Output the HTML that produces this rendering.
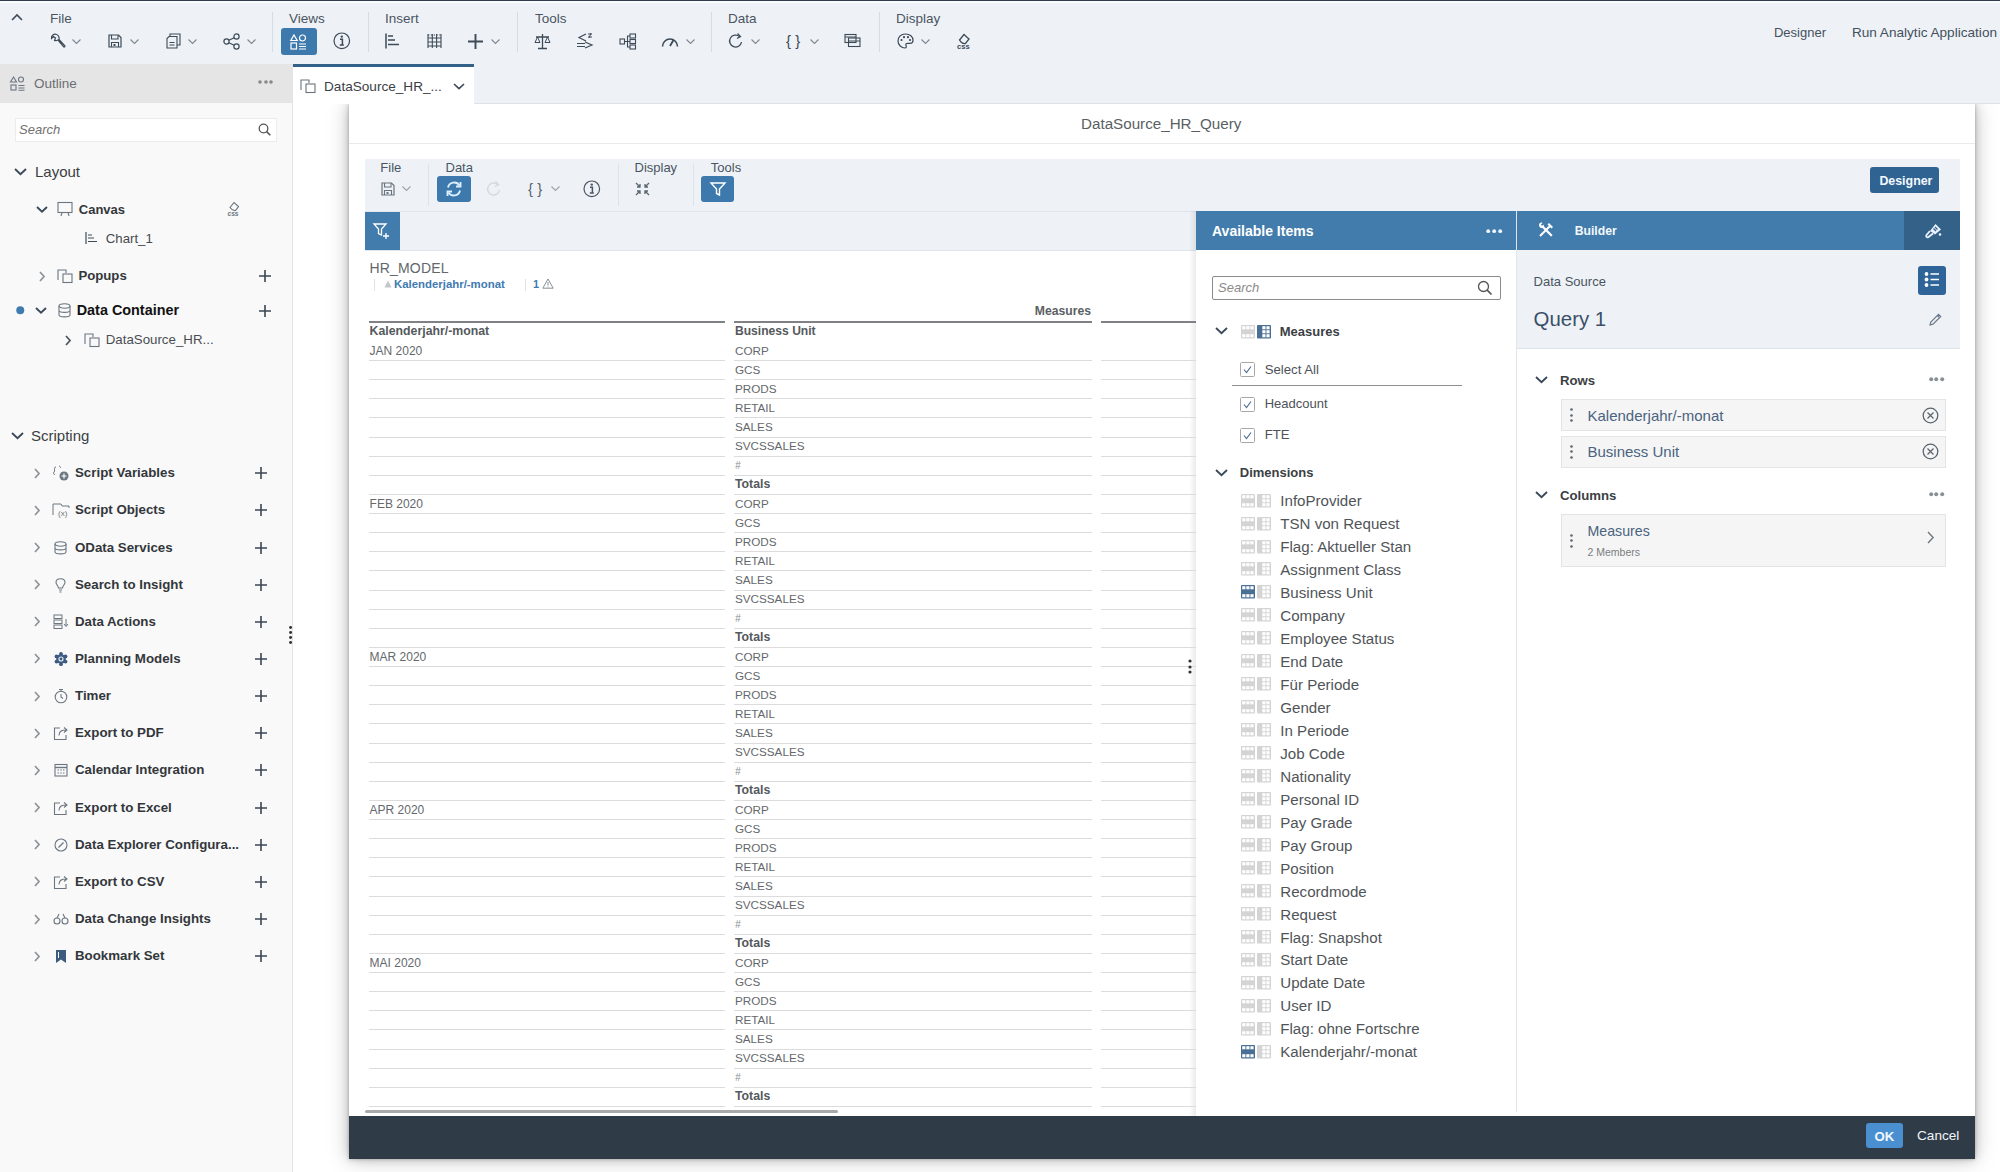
<!DOCTYPE html><html><head><meta charset="utf-8"><style>
html,body{margin:0;padding:0;width:2000px;height:1172px;overflow:hidden;background:#fff;font-family:"Liberation Sans", sans-serif;}
.t{position:absolute;white-space:nowrap;}
.r{position:absolute;}
svg.r{overflow:visible}
</style></head><body>
<div class="r" style="left:0px;top:0px;width:2000px;height:64px;background:#eef2f7;"></div>
<div class="r" style="left:0px;top:0px;width:2000px;height:1px;background:#2f3d4c;"></div>
<div class="r" style="left:0px;top:1px;width:2000px;height:2px;background:#f9fcff;"></div>
<div class="r" style="left:272px;top:12px;width:1px;height:40px;background:#d6dce3;"></div>
<div class="r" style="left:368px;top:12px;width:1px;height:40px;background:#d6dce3;"></div>
<div class="r" style="left:517px;top:12px;width:1px;height:40px;background:#d6dce3;"></div>
<div class="r" style="left:711px;top:12px;width:1px;height:40px;background:#d6dce3;"></div>
<div class="r" style="left:879px;top:12px;width:1px;height:40px;background:#d6dce3;"></div>
<div class="t" style="top:12.03px;font-size:13.5px;line-height:13.5px;left:50.00px;color:#4a5561;">File</div>
<div class="t" style="top:12.03px;font-size:13.5px;line-height:13.5px;left:289.00px;color:#4a5561;">Views</div>
<div class="t" style="top:12.03px;font-size:13.5px;line-height:13.5px;left:385.00px;color:#4a5561;">Insert</div>
<div class="t" style="top:12.03px;font-size:13.5px;line-height:13.5px;left:535.00px;color:#4a5561;">Tools</div>
<div class="t" style="top:12.03px;font-size:13.5px;line-height:13.5px;left:728.00px;color:#4a5561;">Data</div>
<div class="t" style="top:12.03px;font-size:13.5px;line-height:13.5px;left:896.00px;color:#4a5561;">Display</div>
<div class="t" style="top:26.15px;font-size:13px;line-height:13px;right:174.00px;color:#45505c;">Designer</div>
<div class="t" style="top:25.64px;font-size:13.6px;line-height:13.6px;right:3.00px;color:#45505c;">Run Analytic Application</div>
<div class="r" style="left:0px;top:64px;width:293px;height:1108px;background:#f9f9f9;"></div>
<div class="r" style="left:292px;top:64px;width:1px;height:1108px;background:#e4e4e4;"></div>
<div class="r" style="left:0px;top:64px;width:292px;height:39px;background:#e5e5e5;"></div>
<div class="t" style="top:76.53px;font-size:13.5px;line-height:13.5px;left:34.00px;color:#6b6f73;">Outline</div>
<div class="r" style="left:15px;top:118px;width:262px;height:24px;background:#fff;border:1px solid #ececec;box-sizing:border-box;"></div>
<div class="t" style="top:123.45px;font-size:13px;line-height:13px;left:19.00px;font-style:italic;color:#707070;">Search</div>
<div class="r" style="left:349px;top:104px;width:1626px;height:1055px;background:#fff;box-shadow:0 0 3px rgba(0,0,0,0.22),0 0 8px rgba(0,0,0,0.14),0 0 20px rgba(0,0,0,0.26);"></div>
<div class="r" style="left:293px;top:64px;width:1707px;height:40px;background:#eef2f7;"></div>
<div class="r" style="left:293px;top:103px;width:1707px;height:1px;background:#dde3ea;"></div>
<div class="r" style="left:293px;top:64px;width:181px;height:40px;background:#fff;"></div>
<div class="r" style="left:293px;top:64px;width:181px;height:3px;background:#346187;"></div>
<div class="t" style="top:116.08px;font-size:15.2px;line-height:15.2px;left:0.00px;color:#5a5f64;left:1081px;">DataSource_HR_Query</div>
<div class="r" style="left:349px;top:143px;width:1626px;height:1px;background:#eaeaea;"></div>
<div class="r" style="left:365px;top:159px;width:1595px;height:52px;background:#eef2f7;"></div>
<div class="r" style="left:365px;top:211px;width:1595px;height:1px;background:#dfe5ec;"></div>
<div class="r" style="left:365px;top:212px;width:831px;height:38px;background:#eef2f7;"></div>
<div class="r" style="left:365px;top:250px;width:831px;height:1px;background:#dfe5ec;"></div>
<div class="r" style="left:365px;top:212px;width:35px;height:38px;background:#427cac;"></div>
<div class="r" style="left:349px;top:1116px;width:1626px;height:43px;background:#2f3c48;"></div>
<div class="r" style="left:1196px;top:211px;width:320px;height:905px;background:#fff;"></div>
<div class="r" style="left:1189px;top:211px;width:7px;height:905px;background:linear-gradient(90deg,rgba(0,0,0,0) 0%,rgba(0,0,0,0.08) 100%);"></div>
<div class="r" style="left:1196px;top:211px;width:320px;height:39px;background:#427cac;"></div>
<div class="r" style="left:1516px;top:211px;width:1px;height:901px;background:#e5e5e5;"></div>
<div class="t" style="top:224.10px;font-size:14px;line-height:14px;left:1212.00px;font-weight:700;color:#ffffff;">Available Items</div>
<div class="r" style="left:1517px;top:211px;width:443px;height:39px;background:#427cac;"></div>
<div class="r" style="left:1904px;top:211px;width:56px;height:39px;background:#346187;"></div>
<div class="t" style="top:225.03px;font-size:12.2px;line-height:12.2px;left:1574.70px;font-weight:700;color:#f4f8fc;">Builder</div>
<div class="r" style="left:1517px;top:250px;width:443px;height:98px;background:#eef2f7;"></div>
<div class="r" style="left:1517px;top:348px;width:443px;height:1px;background:#dde3ea;"></div>
<div class="t" style="top:274.65px;font-size:13px;line-height:13px;left:1533.60px;color:#4a5561;">Data Source</div>
<div class="t" style="top:309.36px;font-size:20.4px;line-height:20.4px;left:1533.60px;color:#3a4f68;">Query 1</div>
<div class="r" style="left:1918px;top:266px;width:28px;height:29px;background:#2e6497;border-radius:3px;"></div>
<svg class="r" style="left:10px;top:76px;" width="15" height="15" viewBox="0 0 15 15"><path d="M3.5,1 L6.5,6 H0.5Z" fill="none" stroke="#6c7680" stroke-width="1.1"/><circle cx="11" cy="3.5" r="2.5" fill="none" stroke="#6c7680" stroke-width="1.1"/><rect x="1" y="9" width="5" height="5" fill="none" stroke="#6c7680" stroke-width="1.1"/><path d="M8.5,9.5h6M8.5,12h6M8.5,14.3h6" stroke="#6c7680" stroke-width="1.1"/></svg>
<svg class="r" style="left:258.0px;top:80px;" width="4" height="4" viewBox="0 0 4 4"><circle cx="2" cy="2" r="1.8" fill="#888"/></svg>
<svg class="r" style="left:263.5px;top:80px;" width="4" height="4" viewBox="0 0 4 4"><circle cx="2" cy="2" r="1.8" fill="#888"/></svg>
<svg class="r" style="left:269.0px;top:80px;" width="4" height="4" viewBox="0 0 4 4"><circle cx="2" cy="2" r="1.8" fill="#888"/></svg>
<svg class="r" style="left:258px;top:123px;" width="13" height="13" viewBox="0 0 13 13"><circle cx="5.5" cy="5.5" r="4.3" fill="none" stroke="#555" stroke-width="1.3"/><path d="M8.6,8.6 L12.3,12.3" stroke="#555" stroke-width="1.6"/></svg>
<svg class="r" style="left:14.0px;top:167.925px;" width="13" height="7.15" viewBox="0 0 13 7.15"><polyline points="1,1 6.5,6.15 12,1" fill="none" stroke="#3a4a5a" stroke-width="1.9"/></svg>
<div class="t" style="top:164.05px;font-size:15px;line-height:15px;left:35.00px;color:#3b3f44;">Layout</div>
<svg class="r" style="left:35.5px;top:206.2px;" width="12" height="6.6000000000000005" viewBox="0 0 12 6.6000000000000005"><polyline points="1,1 6.0,5.6000000000000005 11,1" fill="none" stroke="#3a4a5a" stroke-width="1.9"/></svg>
<svg class="r" style="left:57px;top:201px;" width="16" height="16" viewBox="0 0 16 16"><rect x="1" y="1.5" width="14" height="10" fill="none" stroke="#6c7680" stroke-width="1.1"/><path d="M5,11.5 L4,15 M11,11.5 L12,15" stroke="#6c7680" stroke-width="1.1"/></svg>
<div class="t" style="top:202.75px;font-size:13px;line-height:13px;left:78.80px;font-weight:700;color:#33373b;">Canvas</div>
<svg class="r" style="left:226px;top:201px;" width="15" height="16" viewBox="0 0 15 16"><path d="M4,6.5 L8,1.5 L12.5,5.5 L9.5,9.5 C7.5,10 5.5,8.5 4,6.5Z" fill="none" stroke="#6c7680" stroke-width="1.2"/><text x="1.5" y="15" font-size="6.6" font-weight="700" font-family="Liberation Sans" fill="#6c7680">css</text></svg>
<svg class="r" style="left:85px;top:232px;" width="14" height="12" viewBox="0 0 14 12"><path d="M1,0 V12 M3,3h4 M3,6h6 M3,9.5h9" stroke="#3e4b59" stroke-width="1.2"/></svg>
<div class="t" style="top:231.78px;font-size:13.2px;line-height:13.2px;left:105.80px;color:#45494e;">Chart_1</div>
<svg class="r" style="left:39.475px;top:270.5px;" width="6.050000000000001" height="11" viewBox="0 0 6.050000000000001 11"><polyline points="1,1 5.050000000000001,5.5 1,10" fill="none" stroke="#8d9399" stroke-width="1.7"/></svg>
<svg class="r" style="left:57px;top:269px;" width="16" height="14" viewBox="0 0 16 14"><path d="M1,11 V1 H9 V4" fill="none" stroke="#6c7680" stroke-width="1.1"/><rect x="6" y="5" width="9" height="8.5" fill="none" stroke="#6c7680" stroke-width="1.1"/></svg>
<div class="t" style="top:269.28px;font-size:13.2px;line-height:13.2px;left:78.40px;font-weight:700;color:#33373b;">Popups</div>
<svg class="r" style="left:259.0px;top:270.0px;" width="12" height="12" viewBox="0 0 12 12"><path d="M6.0,0 V12 M0,6.0 H12" stroke="#3a4654" stroke-width="1.6"/></svg>
<svg class="r" style="left:15.5px;top:306px;" width="8.5" height="8.5" viewBox="0 0 8.5 8.5"><circle cx="4.25" cy="4.25" r="4" fill="#3f7ab0"/></svg>
<svg class="r" style="left:35.3px;top:307.2px;" width="12" height="6.6000000000000005" viewBox="0 0 12 6.6000000000000005"><polyline points="1,1 6.0,5.6000000000000005 11,1" fill="none" stroke="#3a4a5a" stroke-width="1.9"/></svg>
<svg class="r" style="left:58px;top:303px;" width="13" height="15" viewBox="0 0 13 15"><ellipse cx="6.5" cy="3" rx="5.5" ry="2.2" fill="none" stroke="#6c7680" stroke-width="1.1"/><path d="M1,3 V12 C1,14.5 12,14.5 12,12 V3 M1,7.5 C1,10 12,10 12,7.5" fill="none" stroke="#6c7680" stroke-width="1.1"/></svg>
<div class="t" style="top:303.26px;font-size:14.4px;line-height:14.4px;left:76.70px;font-weight:700;color:#111;">Data Container</div>
<svg class="r" style="left:259.0px;top:304.5px;" width="12" height="12" viewBox="0 0 12 12"><path d="M6.0,0 V12 M0,6.0 H12" stroke="#3a4654" stroke-width="1.6"/></svg>
<svg class="r" style="left:65.475px;top:334.5px;" width="6.050000000000001" height="11" viewBox="0 0 6.050000000000001 11"><polyline points="1,1 5.050000000000001,5.5 1,10" fill="none" stroke="#4a5360" stroke-width="1.7"/></svg>
<svg class="r" style="left:84px;top:333px;" width="16" height="14" viewBox="0 0 16 14"><path d="M1,11 V1 H9 V4" fill="none" stroke="#6c7680" stroke-width="1.1"/><rect x="6" y="5" width="9" height="8.5" fill="none" stroke="#6c7680" stroke-width="1.1"/></svg>
<div class="t" style="top:333.30px;font-size:13.3px;line-height:13.3px;left:105.70px;color:#4a4e53;">DataSource_HR...</div>
<svg class="r" style="left:10.5px;top:432.425px;" width="13" height="7.15" viewBox="0 0 13 7.15"><polyline points="1,1 6.5,6.15 12,1" fill="none" stroke="#3a4a5a" stroke-width="1.9"/></svg>
<div class="t" style="top:428.25px;font-size:15px;line-height:15px;left:31.00px;color:#3b3f44;">Scripting</div>
<svg class="r" style="left:34.175000000000004px;top:467.7px;" width="6.050000000000001" height="11" viewBox="0 0 6.050000000000001 11"><polyline points="1,1 5.050000000000001,5.5 1,10" fill="none" stroke="#8d9399" stroke-width="1.7"/></svg>
<div class="t" style="top:466.19px;font-size:13.3px;line-height:13.3px;left:75.00px;font-weight:700;color:#33373b;">Script Variables</div>
<svg class="r" style="left:255.0px;top:467.2px;" width="12" height="12" viewBox="0 0 12 12"><path d="M6.0,0 V12 M0,6.0 H12" stroke="#3a4654" stroke-width="1.6"/></svg>
<svg class="r" style="left:52px;top:465.2px;" width="18" height="16" viewBox="0 0 18 16"><path d="M4,2 C2,2 2.5,4 2.5,6 C2.5,7.5 1,8 1,8 C1,8 2.5,8.5 2.5,10 M7,1 C8,1 8.5,2 8.5,3" fill="none" stroke="#6c7680" stroke-width="1"/><circle cx="12" cy="11" r="4.5" fill="#6c7680"/><path d="M12,8.5v5M9.5,11h5" stroke="#fff" stroke-width="1.2"/></svg>
<svg class="r" style="left:34.175000000000004px;top:504.84999999999997px;" width="6.050000000000001" height="11" viewBox="0 0 6.050000000000001 11"><polyline points="1,1 5.050000000000001,5.5 1,10" fill="none" stroke="#8d9399" stroke-width="1.7"/></svg>
<div class="t" style="top:503.34px;font-size:13.3px;line-height:13.3px;left:75.00px;font-weight:700;color:#33373b;">Script Objects</div>
<svg class="r" style="left:255.0px;top:504.34999999999997px;" width="12" height="12" viewBox="0 0 12 12"><path d="M6.0,0 V12 M0,6.0 H12" stroke="#3a4654" stroke-width="1.6"/></svg>
<svg class="r" style="left:52px;top:502.34999999999997px;" width="19" height="16" viewBox="0 0 19 16"><path d="M1,13 V2 H9 L10,4 H17 V6" fill="none" stroke="#6c7680" stroke-width="1"/><text x="6" y="14" font-size="8" font-family="Liberation Sans" fill="#6c7680">(x)</text></svg>
<svg class="r" style="left:34.175000000000004px;top:542.0px;" width="6.050000000000001" height="11" viewBox="0 0 6.050000000000001 11"><polyline points="1,1 5.050000000000001,5.5 1,10" fill="none" stroke="#8d9399" stroke-width="1.7"/></svg>
<div class="t" style="top:540.50px;font-size:13.3px;line-height:13.3px;left:75.00px;font-weight:700;color:#33373b;">OData Services</div>
<svg class="r" style="left:255.0px;top:541.5px;" width="12" height="12" viewBox="0 0 12 12"><path d="M6.0,0 V12 M0,6.0 H12" stroke="#3a4654" stroke-width="1.6"/></svg>
<svg class="r" style="left:54px;top:540.5px;" width="13" height="14" viewBox="0 0 13 14"><ellipse cx="6.5" cy="3" rx="5.5" ry="2.2" fill="none" stroke="#6c7680" stroke-width="1.1"/><path d="M1,3 V11 C1,13.5 12,13.5 12,11 V3 M1,7 C1,9.5 12,9.5 12,7" fill="none" stroke="#6c7680" stroke-width="1.1"/></svg>
<svg class="r" style="left:34.175000000000004px;top:579.15px;" width="6.050000000000001" height="11" viewBox="0 0 6.050000000000001 11"><polyline points="1,1 5.050000000000001,5.5 1,10" fill="none" stroke="#8d9399" stroke-width="1.7"/></svg>
<div class="t" style="top:577.64px;font-size:13.3px;line-height:13.3px;left:75.00px;font-weight:700;color:#33373b;">Search to Insight</div>
<svg class="r" style="left:255.0px;top:578.65px;" width="12" height="12" viewBox="0 0 12 12"><path d="M6.0,0 V12 M0,6.0 H12" stroke="#3a4654" stroke-width="1.6"/></svg>
<svg class="r" style="left:55px;top:577.65px;" width="11" height="15" viewBox="0 0 11 15"><path d="M3.5,10 C3.5,8 1,6.5 1,4.5 C1,2 3,0.8 5.5,0.8 C8,0.8 10,2 10,4.5 C10,6.5 7.5,8 7.5,10Z M4,12h3 M4.5,14h2" fill="none" stroke="#6c7680" stroke-width="1.1"/></svg>
<svg class="r" style="left:34.175000000000004px;top:616.3px;" width="6.050000000000001" height="11" viewBox="0 0 6.050000000000001 11"><polyline points="1,1 5.050000000000001,5.5 1,10" fill="none" stroke="#8d9399" stroke-width="1.7"/></svg>
<div class="t" style="top:614.79px;font-size:13.3px;line-height:13.3px;left:75.00px;font-weight:700;color:#33373b;">Data Actions</div>
<svg class="r" style="left:255.0px;top:615.8px;" width="12" height="12" viewBox="0 0 12 12"><path d="M6.0,0 V12 M0,6.0 H12" stroke="#3a4654" stroke-width="1.6"/></svg>
<svg class="r" style="left:53px;top:613.8px;" width="16" height="16" viewBox="0 0 16 16"><rect x="1" y="1" width="8" height="3.5" fill="none" stroke="#6c7680" stroke-width="1"/><rect x="1" y="6" width="8" height="3.5" fill="none" stroke="#6c7680" stroke-width="1"/><rect x="1" y="11" width="8" height="3.5" fill="none" stroke="#6c7680" stroke-width="1"/><path d="M13,5 V12 M11,10 L13,12.5 L15,10" fill="none" stroke="#6c7680" stroke-width="1"/></svg>
<svg class="r" style="left:34.175000000000004px;top:653.45px;" width="6.050000000000001" height="11" viewBox="0 0 6.050000000000001 11"><polyline points="1,1 5.050000000000001,5.5 1,10" fill="none" stroke="#8d9399" stroke-width="1.7"/></svg>
<div class="t" style="top:651.95px;font-size:13.3px;line-height:13.3px;left:75.00px;font-weight:700;color:#33373b;">Planning Models</div>
<svg class="r" style="left:255.0px;top:652.95px;" width="12" height="12" viewBox="0 0 12 12"><path d="M6.0,0 V12 M0,6.0 H12" stroke="#3a4654" stroke-width="1.6"/></svg>
<svg class="r" style="left:54px;top:651.95px;" width="14" height="14" viewBox="0 0 14 14"><circle cx="11.50" cy="9.60" r="1.9" fill="#3d5a80"/><circle cx="7.00" cy="12.20" r="1.9" fill="#3d5a80"/><circle cx="2.50" cy="9.60" r="1.9" fill="#3d5a80"/><circle cx="2.50" cy="4.40" r="1.9" fill="#3d5a80"/><circle cx="7.00" cy="1.80" r="1.9" fill="#3d5a80"/><circle cx="11.50" cy="4.40" r="1.9" fill="#3d5a80"/><circle cx="7" cy="7" r="4.8" fill="#3d5a80"/><circle cx="7" cy="7" r="2.6" fill="#dfe8f2"/><circle cx="7" cy="7" r="1.4" fill="#3d5a80"/></svg>
<svg class="r" style="left:34.175000000000004px;top:690.5999999999999px;" width="6.050000000000001" height="11" viewBox="0 0 6.050000000000001 11"><polyline points="1,1 5.050000000000001,5.5 1,10" fill="none" stroke="#8d9399" stroke-width="1.7"/></svg>
<div class="t" style="top:689.09px;font-size:13.3px;line-height:13.3px;left:75.00px;font-weight:700;color:#33373b;">Timer</div>
<svg class="r" style="left:255.0px;top:690.0999999999999px;" width="12" height="12" viewBox="0 0 12 12"><path d="M6.0,0 V12 M0,6.0 H12" stroke="#3a4654" stroke-width="1.6"/></svg>
<svg class="r" style="left:54px;top:688.0999999999999px;" width="14" height="16" viewBox="0 0 14 16"><circle cx="7" cy="9" r="5.8" fill="none" stroke="#6c7680" stroke-width="1.1"/><path d="M7,6 V9 L9,10.5 M5,1.5h4 M7,1.5v1.5" fill="none" stroke="#6c7680" stroke-width="1.1"/></svg>
<svg class="r" style="left:34.175000000000004px;top:727.75px;" width="6.050000000000001" height="11" viewBox="0 0 6.050000000000001 11"><polyline points="1,1 5.050000000000001,5.5 1,10" fill="none" stroke="#8d9399" stroke-width="1.7"/></svg>
<div class="t" style="top:726.25px;font-size:13.3px;line-height:13.3px;left:75.00px;font-weight:700;color:#33373b;">Export to PDF</div>
<svg class="r" style="left:255.0px;top:727.25px;" width="12" height="12" viewBox="0 0 12 12"><path d="M6.0,0 V12 M0,6.0 H12" stroke="#3a4654" stroke-width="1.6"/></svg>
<svg class="r" style="left:53px;top:726.25px;" width="16" height="15" viewBox="0 0 16 15"><path d="M7,2 H1.5 V13.5 H13 V9" fill="none" stroke="#6c7680" stroke-width="1.1"/><path d="M6,9.5 C6,5 9,4 13,4 M11,1.5 L14,4 L11,6.5" fill="none" stroke="#6c7680" stroke-width="1.1"/></svg>
<svg class="r" style="left:34.175000000000004px;top:764.9px;" width="6.050000000000001" height="11" viewBox="0 0 6.050000000000001 11"><polyline points="1,1 5.050000000000001,5.5 1,10" fill="none" stroke="#8d9399" stroke-width="1.7"/></svg>
<div class="t" style="top:763.39px;font-size:13.3px;line-height:13.3px;left:75.00px;font-weight:700;color:#33373b;">Calendar Integration</div>
<svg class="r" style="left:255.0px;top:764.4px;" width="12" height="12" viewBox="0 0 12 12"><path d="M6.0,0 V12 M0,6.0 H12" stroke="#3a4654" stroke-width="1.6"/></svg>
<svg class="r" style="left:54px;top:763.4px;" width="14" height="14" viewBox="0 0 14 14"><rect x="1" y="1.5" width="12" height="11.5" fill="none" stroke="#6c7680" stroke-width="1.1"/><path d="M1,4.5h12" stroke="#6c7680" stroke-width="1.4"/><path d="M3.5,7h1.5M6.3,7h1.5M9,7h1.5M3.5,10h1.5M6.3,10h1.5M9,10h1.5" stroke="#6c7680" stroke-width="1.2"/></svg>
<svg class="r" style="left:34.175000000000004px;top:802.05px;" width="6.050000000000001" height="11" viewBox="0 0 6.050000000000001 11"><polyline points="1,1 5.050000000000001,5.5 1,10" fill="none" stroke="#8d9399" stroke-width="1.7"/></svg>
<div class="t" style="top:800.54px;font-size:13.3px;line-height:13.3px;left:75.00px;font-weight:700;color:#33373b;">Export to Excel</div>
<svg class="r" style="left:255.0px;top:801.55px;" width="12" height="12" viewBox="0 0 12 12"><path d="M6.0,0 V12 M0,6.0 H12" stroke="#3a4654" stroke-width="1.6"/></svg>
<svg class="r" style="left:53px;top:800.55px;" width="16" height="15" viewBox="0 0 16 15"><path d="M7,2 H1.5 V13.5 H13 V9" fill="none" stroke="#6c7680" stroke-width="1.1"/><path d="M6,9.5 C6,5 9,4 13,4 M11,1.5 L14,4 L11,6.5" fill="none" stroke="#6c7680" stroke-width="1.1"/></svg>
<svg class="r" style="left:34.175000000000004px;top:839.2px;" width="6.050000000000001" height="11" viewBox="0 0 6.050000000000001 11"><polyline points="1,1 5.050000000000001,5.5 1,10" fill="none" stroke="#8d9399" stroke-width="1.7"/></svg>
<div class="t" style="top:837.70px;font-size:13.3px;line-height:13.3px;left:75.00px;font-weight:700;color:#33373b;">Data Explorer Configura...</div>
<svg class="r" style="left:255.0px;top:838.7px;" width="12" height="12" viewBox="0 0 12 12"><path d="M6.0,0 V12 M0,6.0 H12" stroke="#3a4654" stroke-width="1.6"/></svg>
<svg class="r" style="left:54px;top:837.7px;" width="14" height="14" viewBox="0 0 14 14"><circle cx="7" cy="7" r="6" fill="none" stroke="#6c7680" stroke-width="1.1"/><path d="M4.5,9.5 L9.5,4.5" stroke="#6c7680" stroke-width="1.3"/></svg>
<svg class="r" style="left:34.175000000000004px;top:876.3499999999999px;" width="6.050000000000001" height="11" viewBox="0 0 6.050000000000001 11"><polyline points="1,1 5.050000000000001,5.5 1,10" fill="none" stroke="#8d9399" stroke-width="1.7"/></svg>
<div class="t" style="top:874.84px;font-size:13.3px;line-height:13.3px;left:75.00px;font-weight:700;color:#33373b;">Export to CSV</div>
<svg class="r" style="left:255.0px;top:875.8499999999999px;" width="12" height="12" viewBox="0 0 12 12"><path d="M6.0,0 V12 M0,6.0 H12" stroke="#3a4654" stroke-width="1.6"/></svg>
<svg class="r" style="left:53px;top:874.8499999999999px;" width="16" height="15" viewBox="0 0 16 15"><path d="M7,2 H1.5 V13.5 H13 V9" fill="none" stroke="#6c7680" stroke-width="1.1"/><path d="M6,9.5 C6,5 9,4 13,4 M11,1.5 L14,4 L11,6.5" fill="none" stroke="#6c7680" stroke-width="1.1"/></svg>
<svg class="r" style="left:34.175000000000004px;top:913.5px;" width="6.050000000000001" height="11" viewBox="0 0 6.050000000000001 11"><polyline points="1,1 5.050000000000001,5.5 1,10" fill="none" stroke="#8d9399" stroke-width="1.7"/></svg>
<div class="t" style="top:912.00px;font-size:13.3px;line-height:13.3px;left:75.00px;font-weight:700;color:#33373b;">Data Change Insights</div>
<svg class="r" style="left:255.0px;top:913.0px;" width="12" height="12" viewBox="0 0 12 12"><path d="M6.0,0 V12 M0,6.0 H12" stroke="#3a4654" stroke-width="1.6"/></svg>
<svg class="r" style="left:53px;top:913.0px;" width="16" height="12" viewBox="0 0 16 12"><circle cx="4" cy="8" r="3" fill="none" stroke="#6c7680" stroke-width="1.1"/><circle cx="12" cy="8" r="3" fill="none" stroke="#6c7680" stroke-width="1.1"/><path d="M4,5 L6,1 M12,5 L10,1" stroke="#6c7680" stroke-width="1.1"/></svg>
<svg class="r" style="left:34.175000000000004px;top:950.65px;" width="6.050000000000001" height="11" viewBox="0 0 6.050000000000001 11"><polyline points="1,1 5.050000000000001,5.5 1,10" fill="none" stroke="#8d9399" stroke-width="1.7"/></svg>
<div class="t" style="top:949.14px;font-size:13.3px;line-height:13.3px;left:75.00px;font-weight:700;color:#33373b;">Bookmark Set</div>
<svg class="r" style="left:255.0px;top:950.15px;" width="12" height="12" viewBox="0 0 12 12"><path d="M6.0,0 V12 M0,6.0 H12" stroke="#3a4654" stroke-width="1.6"/></svg>
<svg class="r" style="left:55px;top:949.15px;" width="12" height="15" viewBox="0 0 12 15"><path d="M1,1 H11 V14 L6,10.5 L1,14Z" fill="#3d5a80"/><path d="M3.5,3v6" stroke="#fff" stroke-width="1"/></svg>
<svg class="r" style="left:288.6px;top:626.0px;" width="3.2" height="3.2" viewBox="0 0 3.2 3.2"><circle cx="1.6" cy="1.6" r="1.5" fill="#333"/></svg>
<svg class="r" style="left:288.6px;top:631.15px;" width="3.2" height="3.2" viewBox="0 0 3.2 3.2"><circle cx="1.6" cy="1.6" r="1.5" fill="#333"/></svg>
<svg class="r" style="left:288.6px;top:636.3px;" width="3.2" height="3.2" viewBox="0 0 3.2 3.2"><circle cx="1.6" cy="1.6" r="1.5" fill="#333"/></svg>
<svg class="r" style="left:288.6px;top:641.45px;" width="3.2" height="3.2" viewBox="0 0 3.2 3.2"><circle cx="1.6" cy="1.6" r="1.5" fill="#333"/></svg>
<div class="t" style="top:260.70px;font-size:14px;line-height:14px;left:369.60px;color:#63676b;letter-spacing:0.15px;">HR_MODEL</div>
<div class="r" style="left:374px;top:279px;width:1px;height:12px;background:#e2e2e2;"></div>
<svg class="r" style="left:383.5px;top:280px;" width="8" height="8" viewBox="0 0 8 8"><path d="M4,0.5 L7.5,7.5 H0.5Z" fill="#c3c7cb"/></svg>
<div class="t" style="top:278.91px;font-size:11.4px;line-height:11.4px;left:394.00px;font-weight:700;color:#3f7ab0;">Kalenderjahr/-monat</div>
<div class="r" style="left:525px;top:279px;width:1px;height:12px;background:#e2e2e2;"></div>
<div class="t" style="top:279.25px;font-size:11px;line-height:11px;left:533.00px;font-weight:700;color:#3f7ab0;">1</div>
<svg class="r" style="left:541.5px;top:278px;" width="12" height="11" viewBox="0 0 12 11"><path d="M6,1 L11.2,10.2 H0.8Z" fill="none" stroke="#8a8f94" stroke-width="1"/><path d="M6,4v3.5M6,8.5v1" stroke="#8a8f94" stroke-width="1"/></svg>
<div class="t" style="top:304.63px;font-size:12.2px;line-height:12.2px;right:909.00px;font-weight:700;color:#5b5f63;">Measures</div>
<div class="r" style="left:369px;top:321px;width:356px;height:1.6px;background:#7f8184;"></div>
<div class="r" style="left:734px;top:321px;width:358px;height:1.6px;background:#7f8184;"></div>
<div class="r" style="left:1101px;top:321px;width:95px;height:1.6px;background:#7f8184;"></div>
<div class="t" style="top:324.55px;font-size:12.3px;line-height:12.3px;left:369.60px;font-weight:700;color:#55595d;">Kalenderjahr/-monat</div>
<div class="t" style="top:324.71px;font-size:12.1px;line-height:12.1px;left:735.00px;font-weight:700;color:#55595d;">Business Unit</div>
<div class="t" style="top:344.50px;font-size:12px;line-height:12px;left:369.60px;color:#64686c;">JAN 2020</div>
<div class="t" style="top:344.75px;font-size:11.7px;line-height:11.7px;left:735.00px;color:#64686c;">CORP</div>
<div class="r" style="left:369px;top:360.0px;width:356px;height:1px;background:#dcdcdc;"></div>
<div class="r" style="left:734px;top:360.0px;width:358px;height:1px;background:#dcdcdc;"></div>
<div class="r" style="left:1101px;top:360.0px;width:95px;height:1px;background:#dcdcdc;"></div>
<div class="t" style="top:363.88px;font-size:11.7px;line-height:11.7px;left:735.00px;color:#64686c;">GCS</div>
<div class="r" style="left:369px;top:379.12px;width:356px;height:1px;background:#dcdcdc;"></div>
<div class="r" style="left:734px;top:379.12px;width:358px;height:1px;background:#dcdcdc;"></div>
<div class="r" style="left:1101px;top:379.12px;width:95px;height:1px;background:#dcdcdc;"></div>
<div class="t" style="top:383.00px;font-size:11.7px;line-height:11.7px;left:735.00px;color:#64686c;">PRODS</div>
<div class="r" style="left:369px;top:398.25px;width:356px;height:1px;background:#dcdcdc;"></div>
<div class="r" style="left:734px;top:398.25px;width:358px;height:1px;background:#dcdcdc;"></div>
<div class="r" style="left:1101px;top:398.25px;width:95px;height:1px;background:#dcdcdc;"></div>
<div class="t" style="top:402.13px;font-size:11.7px;line-height:11.7px;left:735.00px;color:#64686c;">RETAIL</div>
<div class="r" style="left:369px;top:417.38px;width:356px;height:1px;background:#dcdcdc;"></div>
<div class="r" style="left:734px;top:417.38px;width:358px;height:1px;background:#dcdcdc;"></div>
<div class="r" style="left:1101px;top:417.38px;width:95px;height:1px;background:#dcdcdc;"></div>
<div class="t" style="top:421.25px;font-size:11.7px;line-height:11.7px;left:735.00px;color:#64686c;">SALES</div>
<div class="r" style="left:369px;top:436.5px;width:356px;height:1px;background:#dcdcdc;"></div>
<div class="r" style="left:734px;top:436.5px;width:358px;height:1px;background:#dcdcdc;"></div>
<div class="r" style="left:1101px;top:436.5px;width:95px;height:1px;background:#dcdcdc;"></div>
<div class="t" style="top:440.38px;font-size:11.7px;line-height:11.7px;left:735.00px;color:#64686c;">SVCSSALES</div>
<div class="r" style="left:369px;top:455.62px;width:356px;height:1px;background:#dcdcdc;"></div>
<div class="r" style="left:734px;top:455.62px;width:358px;height:1px;background:#dcdcdc;"></div>
<div class="r" style="left:1101px;top:455.62px;width:95px;height:1px;background:#dcdcdc;"></div>
<div class="t" style="top:460.95px;font-size:10px;line-height:10px;left:735.00px;color:#8a8d90;font-style:italic;">#</div>
<div class="r" style="left:369px;top:474.75px;width:356px;height:1px;background:#dcdcdc;"></div>
<div class="r" style="left:734px;top:474.75px;width:358px;height:1px;background:#dcdcdc;"></div>
<div class="r" style="left:1101px;top:474.75px;width:95px;height:1px;background:#dcdcdc;"></div>
<div class="t" style="top:478.12px;font-size:12.3px;line-height:12.3px;left:735.00px;font-weight:700;color:#55595d;">Totals</div>
<div class="r" style="left:369px;top:493.88px;width:356px;height:1px;background:#dcdcdc;"></div>
<div class="r" style="left:734px;top:493.88px;width:358px;height:1px;background:#dcdcdc;"></div>
<div class="r" style="left:1101px;top:493.88px;width:95px;height:1px;background:#dcdcdc;"></div>
<div class="t" style="top:497.50px;font-size:12px;line-height:12px;left:369.60px;color:#64686c;">FEB 2020</div>
<div class="t" style="top:497.75px;font-size:11.7px;line-height:11.7px;left:735.00px;color:#64686c;">CORP</div>
<div class="r" style="left:369px;top:513.0px;width:356px;height:1px;background:#dcdcdc;"></div>
<div class="r" style="left:734px;top:513.0px;width:358px;height:1px;background:#dcdcdc;"></div>
<div class="r" style="left:1101px;top:513.0px;width:95px;height:1px;background:#dcdcdc;"></div>
<div class="t" style="top:516.88px;font-size:11.7px;line-height:11.7px;left:735.00px;color:#64686c;">GCS</div>
<div class="r" style="left:369px;top:532.12px;width:356px;height:1px;background:#dcdcdc;"></div>
<div class="r" style="left:734px;top:532.12px;width:358px;height:1px;background:#dcdcdc;"></div>
<div class="r" style="left:1101px;top:532.12px;width:95px;height:1px;background:#dcdcdc;"></div>
<div class="t" style="top:536.00px;font-size:11.7px;line-height:11.7px;left:735.00px;color:#64686c;">PRODS</div>
<div class="r" style="left:369px;top:551.25px;width:356px;height:1px;background:#dcdcdc;"></div>
<div class="r" style="left:734px;top:551.25px;width:358px;height:1px;background:#dcdcdc;"></div>
<div class="r" style="left:1101px;top:551.25px;width:95px;height:1px;background:#dcdcdc;"></div>
<div class="t" style="top:555.13px;font-size:11.7px;line-height:11.7px;left:735.00px;color:#64686c;">RETAIL</div>
<div class="r" style="left:369px;top:570.38px;width:356px;height:1px;background:#dcdcdc;"></div>
<div class="r" style="left:734px;top:570.38px;width:358px;height:1px;background:#dcdcdc;"></div>
<div class="r" style="left:1101px;top:570.38px;width:95px;height:1px;background:#dcdcdc;"></div>
<div class="t" style="top:574.25px;font-size:11.7px;line-height:11.7px;left:735.00px;color:#64686c;">SALES</div>
<div class="r" style="left:369px;top:589.5px;width:356px;height:1px;background:#dcdcdc;"></div>
<div class="r" style="left:734px;top:589.5px;width:358px;height:1px;background:#dcdcdc;"></div>
<div class="r" style="left:1101px;top:589.5px;width:95px;height:1px;background:#dcdcdc;"></div>
<div class="t" style="top:593.38px;font-size:11.7px;line-height:11.7px;left:735.00px;color:#64686c;">SVCSSALES</div>
<div class="r" style="left:369px;top:608.62px;width:356px;height:1px;background:#dcdcdc;"></div>
<div class="r" style="left:734px;top:608.62px;width:358px;height:1px;background:#dcdcdc;"></div>
<div class="r" style="left:1101px;top:608.62px;width:95px;height:1px;background:#dcdcdc;"></div>
<div class="t" style="top:613.95px;font-size:10px;line-height:10px;left:735.00px;color:#8a8d90;font-style:italic;">#</div>
<div class="r" style="left:369px;top:627.75px;width:356px;height:1px;background:#dcdcdc;"></div>
<div class="r" style="left:734px;top:627.75px;width:358px;height:1px;background:#dcdcdc;"></div>
<div class="r" style="left:1101px;top:627.75px;width:95px;height:1px;background:#dcdcdc;"></div>
<div class="t" style="top:631.12px;font-size:12.3px;line-height:12.3px;left:735.00px;font-weight:700;color:#55595d;">Totals</div>
<div class="r" style="left:369px;top:646.88px;width:356px;height:1px;background:#dcdcdc;"></div>
<div class="r" style="left:734px;top:646.88px;width:358px;height:1px;background:#dcdcdc;"></div>
<div class="r" style="left:1101px;top:646.88px;width:95px;height:1px;background:#dcdcdc;"></div>
<div class="t" style="top:650.50px;font-size:12px;line-height:12px;left:369.60px;color:#64686c;">MAR 2020</div>
<div class="t" style="top:650.75px;font-size:11.7px;line-height:11.7px;left:735.00px;color:#64686c;">CORP</div>
<div class="r" style="left:369px;top:666.0px;width:356px;height:1px;background:#dcdcdc;"></div>
<div class="r" style="left:734px;top:666.0px;width:358px;height:1px;background:#dcdcdc;"></div>
<div class="r" style="left:1101px;top:666.0px;width:95px;height:1px;background:#dcdcdc;"></div>
<div class="t" style="top:669.88px;font-size:11.7px;line-height:11.7px;left:735.00px;color:#64686c;">GCS</div>
<div class="r" style="left:369px;top:685.12px;width:356px;height:1px;background:#dcdcdc;"></div>
<div class="r" style="left:734px;top:685.12px;width:358px;height:1px;background:#dcdcdc;"></div>
<div class="r" style="left:1101px;top:685.12px;width:95px;height:1px;background:#dcdcdc;"></div>
<div class="t" style="top:689.00px;font-size:11.7px;line-height:11.7px;left:735.00px;color:#64686c;">PRODS</div>
<div class="r" style="left:369px;top:704.25px;width:356px;height:1px;background:#dcdcdc;"></div>
<div class="r" style="left:734px;top:704.25px;width:358px;height:1px;background:#dcdcdc;"></div>
<div class="r" style="left:1101px;top:704.25px;width:95px;height:1px;background:#dcdcdc;"></div>
<div class="t" style="top:708.13px;font-size:11.7px;line-height:11.7px;left:735.00px;color:#64686c;">RETAIL</div>
<div class="r" style="left:369px;top:723.38px;width:356px;height:1px;background:#dcdcdc;"></div>
<div class="r" style="left:734px;top:723.38px;width:358px;height:1px;background:#dcdcdc;"></div>
<div class="r" style="left:1101px;top:723.38px;width:95px;height:1px;background:#dcdcdc;"></div>
<div class="t" style="top:727.25px;font-size:11.7px;line-height:11.7px;left:735.00px;color:#64686c;">SALES</div>
<div class="r" style="left:369px;top:742.5px;width:356px;height:1px;background:#dcdcdc;"></div>
<div class="r" style="left:734px;top:742.5px;width:358px;height:1px;background:#dcdcdc;"></div>
<div class="r" style="left:1101px;top:742.5px;width:95px;height:1px;background:#dcdcdc;"></div>
<div class="t" style="top:746.38px;font-size:11.7px;line-height:11.7px;left:735.00px;color:#64686c;">SVCSSALES</div>
<div class="r" style="left:369px;top:761.62px;width:356px;height:1px;background:#dcdcdc;"></div>
<div class="r" style="left:734px;top:761.62px;width:358px;height:1px;background:#dcdcdc;"></div>
<div class="r" style="left:1101px;top:761.62px;width:95px;height:1px;background:#dcdcdc;"></div>
<div class="t" style="top:766.95px;font-size:10px;line-height:10px;left:735.00px;color:#8a8d90;font-style:italic;">#</div>
<div class="r" style="left:369px;top:780.75px;width:356px;height:1px;background:#dcdcdc;"></div>
<div class="r" style="left:734px;top:780.75px;width:358px;height:1px;background:#dcdcdc;"></div>
<div class="r" style="left:1101px;top:780.75px;width:95px;height:1px;background:#dcdcdc;"></div>
<div class="t" style="top:784.12px;font-size:12.3px;line-height:12.3px;left:735.00px;font-weight:700;color:#55595d;">Totals</div>
<div class="r" style="left:369px;top:799.88px;width:356px;height:1px;background:#dcdcdc;"></div>
<div class="r" style="left:734px;top:799.88px;width:358px;height:1px;background:#dcdcdc;"></div>
<div class="r" style="left:1101px;top:799.88px;width:95px;height:1px;background:#dcdcdc;"></div>
<div class="t" style="top:803.50px;font-size:12px;line-height:12px;left:369.60px;color:#64686c;">APR 2020</div>
<div class="t" style="top:803.75px;font-size:11.7px;line-height:11.7px;left:735.00px;color:#64686c;">CORP</div>
<div class="r" style="left:369px;top:819.0px;width:356px;height:1px;background:#dcdcdc;"></div>
<div class="r" style="left:734px;top:819.0px;width:358px;height:1px;background:#dcdcdc;"></div>
<div class="r" style="left:1101px;top:819.0px;width:95px;height:1px;background:#dcdcdc;"></div>
<div class="t" style="top:822.88px;font-size:11.7px;line-height:11.7px;left:735.00px;color:#64686c;">GCS</div>
<div class="r" style="left:369px;top:838.12px;width:356px;height:1px;background:#dcdcdc;"></div>
<div class="r" style="left:734px;top:838.12px;width:358px;height:1px;background:#dcdcdc;"></div>
<div class="r" style="left:1101px;top:838.12px;width:95px;height:1px;background:#dcdcdc;"></div>
<div class="t" style="top:842.00px;font-size:11.7px;line-height:11.7px;left:735.00px;color:#64686c;">PRODS</div>
<div class="r" style="left:369px;top:857.25px;width:356px;height:1px;background:#dcdcdc;"></div>
<div class="r" style="left:734px;top:857.25px;width:358px;height:1px;background:#dcdcdc;"></div>
<div class="r" style="left:1101px;top:857.25px;width:95px;height:1px;background:#dcdcdc;"></div>
<div class="t" style="top:861.13px;font-size:11.7px;line-height:11.7px;left:735.00px;color:#64686c;">RETAIL</div>
<div class="r" style="left:369px;top:876.38px;width:356px;height:1px;background:#dcdcdc;"></div>
<div class="r" style="left:734px;top:876.38px;width:358px;height:1px;background:#dcdcdc;"></div>
<div class="r" style="left:1101px;top:876.38px;width:95px;height:1px;background:#dcdcdc;"></div>
<div class="t" style="top:880.25px;font-size:11.7px;line-height:11.7px;left:735.00px;color:#64686c;">SALES</div>
<div class="r" style="left:369px;top:895.5px;width:356px;height:1px;background:#dcdcdc;"></div>
<div class="r" style="left:734px;top:895.5px;width:358px;height:1px;background:#dcdcdc;"></div>
<div class="r" style="left:1101px;top:895.5px;width:95px;height:1px;background:#dcdcdc;"></div>
<div class="t" style="top:899.38px;font-size:11.7px;line-height:11.7px;left:735.00px;color:#64686c;">SVCSSALES</div>
<div class="r" style="left:369px;top:914.62px;width:356px;height:1px;background:#dcdcdc;"></div>
<div class="r" style="left:734px;top:914.62px;width:358px;height:1px;background:#dcdcdc;"></div>
<div class="r" style="left:1101px;top:914.62px;width:95px;height:1px;background:#dcdcdc;"></div>
<div class="t" style="top:919.95px;font-size:10px;line-height:10px;left:735.00px;color:#8a8d90;font-style:italic;">#</div>
<div class="r" style="left:369px;top:933.75px;width:356px;height:1px;background:#dcdcdc;"></div>
<div class="r" style="left:734px;top:933.75px;width:358px;height:1px;background:#dcdcdc;"></div>
<div class="r" style="left:1101px;top:933.75px;width:95px;height:1px;background:#dcdcdc;"></div>
<div class="t" style="top:937.12px;font-size:12.3px;line-height:12.3px;left:735.00px;font-weight:700;color:#55595d;">Totals</div>
<div class="r" style="left:369px;top:952.88px;width:356px;height:1px;background:#dcdcdc;"></div>
<div class="r" style="left:734px;top:952.88px;width:358px;height:1px;background:#dcdcdc;"></div>
<div class="r" style="left:1101px;top:952.88px;width:95px;height:1px;background:#dcdcdc;"></div>
<div class="t" style="top:956.50px;font-size:12px;line-height:12px;left:369.60px;color:#64686c;">MAI 2020</div>
<div class="t" style="top:956.75px;font-size:11.7px;line-height:11.7px;left:735.00px;color:#64686c;">CORP</div>
<div class="r" style="left:369px;top:972.0px;width:356px;height:1px;background:#dcdcdc;"></div>
<div class="r" style="left:734px;top:972.0px;width:358px;height:1px;background:#dcdcdc;"></div>
<div class="r" style="left:1101px;top:972.0px;width:95px;height:1px;background:#dcdcdc;"></div>
<div class="t" style="top:975.88px;font-size:11.7px;line-height:11.7px;left:735.00px;color:#64686c;">GCS</div>
<div class="r" style="left:369px;top:991.12px;width:356px;height:1px;background:#dcdcdc;"></div>
<div class="r" style="left:734px;top:991.12px;width:358px;height:1px;background:#dcdcdc;"></div>
<div class="r" style="left:1101px;top:991.12px;width:95px;height:1px;background:#dcdcdc;"></div>
<div class="t" style="top:995.00px;font-size:11.7px;line-height:11.7px;left:735.00px;color:#64686c;">PRODS</div>
<div class="r" style="left:369px;top:1010.25px;width:356px;height:1px;background:#dcdcdc;"></div>
<div class="r" style="left:734px;top:1010.25px;width:358px;height:1px;background:#dcdcdc;"></div>
<div class="r" style="left:1101px;top:1010.25px;width:95px;height:1px;background:#dcdcdc;"></div>
<div class="t" style="top:1014.13px;font-size:11.7px;line-height:11.7px;left:735.00px;color:#64686c;">RETAIL</div>
<div class="r" style="left:369px;top:1029.38px;width:356px;height:1px;background:#dcdcdc;"></div>
<div class="r" style="left:734px;top:1029.38px;width:358px;height:1px;background:#dcdcdc;"></div>
<div class="r" style="left:1101px;top:1029.38px;width:95px;height:1px;background:#dcdcdc;"></div>
<div class="t" style="top:1033.26px;font-size:11.7px;line-height:11.7px;left:735.00px;color:#64686c;">SALES</div>
<div class="r" style="left:369px;top:1048.5px;width:356px;height:1px;background:#dcdcdc;"></div>
<div class="r" style="left:734px;top:1048.5px;width:358px;height:1px;background:#dcdcdc;"></div>
<div class="r" style="left:1101px;top:1048.5px;width:95px;height:1px;background:#dcdcdc;"></div>
<div class="t" style="top:1052.38px;font-size:11.7px;line-height:11.7px;left:735.00px;color:#64686c;">SVCSSALES</div>
<div class="r" style="left:369px;top:1067.62px;width:356px;height:1px;background:#dcdcdc;"></div>
<div class="r" style="left:734px;top:1067.62px;width:358px;height:1px;background:#dcdcdc;"></div>
<div class="r" style="left:1101px;top:1067.62px;width:95px;height:1px;background:#dcdcdc;"></div>
<div class="t" style="top:1072.95px;font-size:10px;line-height:10px;left:735.00px;color:#8a8d90;font-style:italic;">#</div>
<div class="r" style="left:369px;top:1086.75px;width:356px;height:1px;background:#dcdcdc;"></div>
<div class="r" style="left:734px;top:1086.75px;width:358px;height:1px;background:#dcdcdc;"></div>
<div class="r" style="left:1101px;top:1086.75px;width:95px;height:1px;background:#dcdcdc;"></div>
<div class="t" style="top:1090.12px;font-size:12.3px;line-height:12.3px;left:735.00px;font-weight:700;color:#55595d;">Totals</div>
<div class="r" style="left:369px;top:1105.88px;width:356px;height:1px;background:#dcdcdc;"></div>
<div class="r" style="left:734px;top:1105.88px;width:358px;height:1px;background:#dcdcdc;"></div>
<div class="r" style="left:1101px;top:1105.88px;width:95px;height:1px;background:#dcdcdc;"></div>
<div class="r" style="left:365px;top:1109.5px;width:473px;height:3.5px;background:#a9a9a9;border-radius:2px;"></div>
<svg class="r" style="left:1188px;top:659.0px;" width="4" height="4" viewBox="0 0 4 4"><circle cx="2" cy="2" r="1.6" fill="#333"/></svg>
<svg class="r" style="left:1188px;top:664.5px;" width="4" height="4" viewBox="0 0 4 4"><circle cx="2" cy="2" r="1.6" fill="#333"/></svg>
<svg class="r" style="left:1188px;top:670.0px;" width="4" height="4" viewBox="0 0 4 4"><circle cx="2" cy="2" r="1.6" fill="#333"/></svg>
<svg class="r" style="left:1486.0px;top:228.5px;" width="4.4" height="4.4" viewBox="0 0 4.4 4.4"><circle cx="2.2" cy="2.2" r="1.9" fill="#f0f6fc"/></svg>
<svg class="r" style="left:1491.8px;top:228.5px;" width="4.4" height="4.4" viewBox="0 0 4.4 4.4"><circle cx="2.2" cy="2.2" r="1.9" fill="#f0f6fc"/></svg>
<svg class="r" style="left:1497.6px;top:228.5px;" width="4.4" height="4.4" viewBox="0 0 4.4 4.4"><circle cx="2.2" cy="2.2" r="1.9" fill="#f0f6fc"/></svg>
<div class="r" style="left:1212px;top:275.5px;width:289px;height:24.5px;background:#fff;border:1px solid #8b8b8b;border-radius:2px;box-sizing:border-box;"></div>
<div class="t" style="top:280.95px;font-size:13px;line-height:13px;left:1218.00px;font-style:italic;color:#8a8a8a;">Search</div>
<svg class="r" style="left:1477px;top:280px;" width="16" height="16" viewBox="0 0 16 16"><circle cx="6.5" cy="6.5" r="5" fill="none" stroke="#555" stroke-width="1.3"/><path d="M10.2,10.2 L14.5,14.5" stroke="#555" stroke-width="1.7"/></svg>
<svg class="r" style="left:1215.0px;top:327.425px;" width="13" height="7.15" viewBox="0 0 13 7.15"><polyline points="1,1 6.5,6.15 12,1" fill="none" stroke="#3a4a5a" stroke-width="1.9"/></svg>
<svg class="r" style="left:1240.5px;top:324.5px;" width="14" height="13.5" viewBox="0 0 14 13.5"><rect x="0" y="0" width="14" height="13.5" rx="1" fill="#d4d4d4"/><rect x="1.20" y="1.20" width="3.2" height="3.1" fill="#fff"/><rect x="5.30" y="1.20" width="3.2" height="3.1" fill="#fff"/><rect x="9.40" y="1.20" width="3.2" height="3.1" fill="#fff"/><rect x="1.20" y="9.20" width="3.2" height="3.1" fill="#fff"/><rect x="5.30" y="9.20" width="3.2" height="3.1" fill="#fff"/><rect x="9.40" y="9.20" width="3.2" height="3.1" fill="#fff"/></svg>
<svg class="r" style="left:1257.3px;top:324.5px;" width="14" height="13.5" viewBox="0 0 14 13.5"><rect x="0" y="0" width="14" height="13.5" rx="1" fill="#4a6f94"/><rect x="5.30" y="1.20" width="3.2" height="3.1" fill="#fff"/><rect x="9.40" y="1.20" width="3.2" height="3.1" fill="#fff"/><rect x="5.30" y="5.20" width="3.2" height="3.1" fill="#fff"/><rect x="9.40" y="5.20" width="3.2" height="3.1" fill="#fff"/><rect x="5.30" y="9.20" width="3.2" height="3.1" fill="#fff"/><rect x="9.40" y="9.20" width="3.2" height="3.1" fill="#fff"/></svg>
<div class="t" style="top:324.55px;font-size:13px;line-height:13px;left:1279.70px;font-weight:700;color:#3b3f44;">Measures</div>
<svg class="r" style="left:1240px;top:361.5px;" width="15" height="15" viewBox="0 0 15 15"><rect x="0.5" y="0.5" width="14" height="14" rx="1" fill="#fff" stroke="#a8a8a8" stroke-width="1"/><path d="M4,7.5 L6.5,10.5 L11,4.5" fill="none" stroke="#4a6a8a" stroke-width="1.1"/></svg>
<div class="t" style="top:362.78px;font-size:13.2px;line-height:13.2px;left:1264.70px;color:#4e5257;">Select All</div>
<div class="r" style="left:1232px;top:384.5px;width:230px;height:1.5px;background:#8f8f8f;"></div>
<svg class="r" style="left:1240px;top:397px;" width="15" height="15" viewBox="0 0 15 15"><rect x="0.5" y="0.5" width="14" height="14" rx="1" fill="#fff" stroke="#a8a8a8" stroke-width="1"/><path d="M4,7.5 L6.5,10.5 L11,4.5" fill="none" stroke="#4a6a8a" stroke-width="1.1"/></svg>
<div class="t" style="top:397.35px;font-size:13px;line-height:13px;left:1264.70px;color:#4e5257;">Headcount</div>
<svg class="r" style="left:1240px;top:427.5px;" width="15" height="15" viewBox="0 0 15 15"><rect x="0.5" y="0.5" width="14" height="14" rx="1" fill="#fff" stroke="#a8a8a8" stroke-width="1"/><path d="M4,7.5 L6.5,10.5 L11,4.5" fill="none" stroke="#4a6a8a" stroke-width="1.1"/></svg>
<div class="t" style="top:427.58px;font-size:13.2px;line-height:13.2px;left:1264.70px;color:#4e5257;">FTE</div>
<svg class="r" style="left:1215.0px;top:469.02500000000003px;" width="13" height="7.15" viewBox="0 0 13 7.15"><polyline points="1,1 6.5,6.15 12,1" fill="none" stroke="#3a4a5a" stroke-width="1.9"/></svg>
<div class="t" style="top:466.25px;font-size:13px;line-height:13px;left:1239.80px;font-weight:700;color:#3b3f44;">Dimensions</div>
<svg class="r" style="left:1240.9px;top:493.6px;" width="14" height="13.5" viewBox="0 0 14 13.5"><rect x="0" y="0" width="14" height="13.5" rx="1" fill="#d4d4d4"/><rect x="1.20" y="1.20" width="3.2" height="3.1" fill="#fff"/><rect x="5.30" y="1.20" width="3.2" height="3.1" fill="#fff"/><rect x="9.40" y="1.20" width="3.2" height="3.1" fill="#fff"/><rect x="1.20" y="9.20" width="3.2" height="3.1" fill="#fff"/><rect x="5.30" y="9.20" width="3.2" height="3.1" fill="#fff"/><rect x="9.40" y="9.20" width="3.2" height="3.1" fill="#fff"/></svg>
<svg class="r" style="left:1257.3px;top:493.6px;" width="14" height="13.5" viewBox="0 0 14 13.5"><rect x="0" y="0" width="14" height="13.5" rx="1" fill="#d4d4d4"/><rect x="5.30" y="1.20" width="3.2" height="3.1" fill="#fff"/><rect x="9.40" y="1.20" width="3.2" height="3.1" fill="#fff"/><rect x="5.30" y="5.20" width="3.2" height="3.1" fill="#fff"/><rect x="9.40" y="5.20" width="3.2" height="3.1" fill="#fff"/><rect x="5.30" y="9.20" width="3.2" height="3.1" fill="#fff"/><rect x="9.40" y="9.20" width="3.2" height="3.1" fill="#fff"/></svg>
<div class="t" style="top:493.27px;font-size:15.1px;line-height:15.1px;left:1280.30px;color:#505458;">InfoProvider</div>
<svg class="r" style="left:1240.9px;top:516.56px;" width="14" height="13.5" viewBox="0 0 14 13.5"><rect x="0" y="0" width="14" height="13.5" rx="1" fill="#d4d4d4"/><rect x="1.20" y="1.20" width="3.2" height="3.1" fill="#fff"/><rect x="5.30" y="1.20" width="3.2" height="3.1" fill="#fff"/><rect x="9.40" y="1.20" width="3.2" height="3.1" fill="#fff"/><rect x="1.20" y="9.20" width="3.2" height="3.1" fill="#fff"/><rect x="5.30" y="9.20" width="3.2" height="3.1" fill="#fff"/><rect x="9.40" y="9.20" width="3.2" height="3.1" fill="#fff"/></svg>
<svg class="r" style="left:1257.3px;top:516.56px;" width="14" height="13.5" viewBox="0 0 14 13.5"><rect x="0" y="0" width="14" height="13.5" rx="1" fill="#d4d4d4"/><rect x="5.30" y="1.20" width="3.2" height="3.1" fill="#fff"/><rect x="9.40" y="1.20" width="3.2" height="3.1" fill="#fff"/><rect x="5.30" y="5.20" width="3.2" height="3.1" fill="#fff"/><rect x="9.40" y="5.20" width="3.2" height="3.1" fill="#fff"/><rect x="5.30" y="9.20" width="3.2" height="3.1" fill="#fff"/><rect x="9.40" y="9.20" width="3.2" height="3.1" fill="#fff"/></svg>
<div class="t" style="top:516.22px;font-size:15.1px;line-height:15.1px;left:1280.30px;color:#505458;">TSN von Request</div>
<svg class="r" style="left:1240.9px;top:539.52px;" width="14" height="13.5" viewBox="0 0 14 13.5"><rect x="0" y="0" width="14" height="13.5" rx="1" fill="#d4d4d4"/><rect x="1.20" y="1.20" width="3.2" height="3.1" fill="#fff"/><rect x="5.30" y="1.20" width="3.2" height="3.1" fill="#fff"/><rect x="9.40" y="1.20" width="3.2" height="3.1" fill="#fff"/><rect x="1.20" y="9.20" width="3.2" height="3.1" fill="#fff"/><rect x="5.30" y="9.20" width="3.2" height="3.1" fill="#fff"/><rect x="9.40" y="9.20" width="3.2" height="3.1" fill="#fff"/></svg>
<svg class="r" style="left:1257.3px;top:539.52px;" width="14" height="13.5" viewBox="0 0 14 13.5"><rect x="0" y="0" width="14" height="13.5" rx="1" fill="#d4d4d4"/><rect x="5.30" y="1.20" width="3.2" height="3.1" fill="#fff"/><rect x="9.40" y="1.20" width="3.2" height="3.1" fill="#fff"/><rect x="5.30" y="5.20" width="3.2" height="3.1" fill="#fff"/><rect x="9.40" y="5.20" width="3.2" height="3.1" fill="#fff"/><rect x="5.30" y="9.20" width="3.2" height="3.1" fill="#fff"/><rect x="9.40" y="9.20" width="3.2" height="3.1" fill="#fff"/></svg>
<div class="t" style="top:539.18px;font-size:15.1px;line-height:15.1px;left:1280.30px;color:#505458;">Flag: Aktueller Stan</div>
<svg class="r" style="left:1240.9px;top:562.48px;" width="14" height="13.5" viewBox="0 0 14 13.5"><rect x="0" y="0" width="14" height="13.5" rx="1" fill="#d4d4d4"/><rect x="1.20" y="1.20" width="3.2" height="3.1" fill="#fff"/><rect x="5.30" y="1.20" width="3.2" height="3.1" fill="#fff"/><rect x="9.40" y="1.20" width="3.2" height="3.1" fill="#fff"/><rect x="1.20" y="9.20" width="3.2" height="3.1" fill="#fff"/><rect x="5.30" y="9.20" width="3.2" height="3.1" fill="#fff"/><rect x="9.40" y="9.20" width="3.2" height="3.1" fill="#fff"/></svg>
<svg class="r" style="left:1257.3px;top:562.48px;" width="14" height="13.5" viewBox="0 0 14 13.5"><rect x="0" y="0" width="14" height="13.5" rx="1" fill="#d4d4d4"/><rect x="5.30" y="1.20" width="3.2" height="3.1" fill="#fff"/><rect x="9.40" y="1.20" width="3.2" height="3.1" fill="#fff"/><rect x="5.30" y="5.20" width="3.2" height="3.1" fill="#fff"/><rect x="9.40" y="5.20" width="3.2" height="3.1" fill="#fff"/><rect x="5.30" y="9.20" width="3.2" height="3.1" fill="#fff"/><rect x="9.40" y="9.20" width="3.2" height="3.1" fill="#fff"/></svg>
<div class="t" style="top:562.14px;font-size:15.1px;line-height:15.1px;left:1280.30px;color:#505458;">Assignment Class</div>
<svg class="r" style="left:1240.9px;top:585.4399999999999px;" width="14" height="13.5" viewBox="0 0 14 13.5"><rect x="0" y="0" width="14" height="13.5" rx="1" fill="#4a6f94"/><rect x="1.20" y="1.20" width="3.2" height="3.1" fill="#fff"/><rect x="5.30" y="1.20" width="3.2" height="3.1" fill="#fff"/><rect x="9.40" y="1.20" width="3.2" height="3.1" fill="#fff"/><rect x="1.20" y="9.20" width="3.2" height="3.1" fill="#fff"/><rect x="5.30" y="9.20" width="3.2" height="3.1" fill="#fff"/><rect x="9.40" y="9.20" width="3.2" height="3.1" fill="#fff"/></svg>
<svg class="r" style="left:1257.3px;top:585.4399999999999px;" width="14" height="13.5" viewBox="0 0 14 13.5"><rect x="0" y="0" width="14" height="13.5" rx="1" fill="#d4d4d4"/><rect x="5.30" y="1.20" width="3.2" height="3.1" fill="#fff"/><rect x="9.40" y="1.20" width="3.2" height="3.1" fill="#fff"/><rect x="5.30" y="5.20" width="3.2" height="3.1" fill="#fff"/><rect x="9.40" y="5.20" width="3.2" height="3.1" fill="#fff"/><rect x="5.30" y="9.20" width="3.2" height="3.1" fill="#fff"/><rect x="9.40" y="9.20" width="3.2" height="3.1" fill="#fff"/></svg>
<div class="t" style="top:585.10px;font-size:15.1px;line-height:15.1px;left:1280.30px;color:#505458;">Business Unit</div>
<svg class="r" style="left:1240.9px;top:608.4px;" width="14" height="13.5" viewBox="0 0 14 13.5"><rect x="0" y="0" width="14" height="13.5" rx="1" fill="#d4d4d4"/><rect x="1.20" y="1.20" width="3.2" height="3.1" fill="#fff"/><rect x="5.30" y="1.20" width="3.2" height="3.1" fill="#fff"/><rect x="9.40" y="1.20" width="3.2" height="3.1" fill="#fff"/><rect x="1.20" y="9.20" width="3.2" height="3.1" fill="#fff"/><rect x="5.30" y="9.20" width="3.2" height="3.1" fill="#fff"/><rect x="9.40" y="9.20" width="3.2" height="3.1" fill="#fff"/></svg>
<svg class="r" style="left:1257.3px;top:608.4px;" width="14" height="13.5" viewBox="0 0 14 13.5"><rect x="0" y="0" width="14" height="13.5" rx="1" fill="#d4d4d4"/><rect x="5.30" y="1.20" width="3.2" height="3.1" fill="#fff"/><rect x="9.40" y="1.20" width="3.2" height="3.1" fill="#fff"/><rect x="5.30" y="5.20" width="3.2" height="3.1" fill="#fff"/><rect x="9.40" y="5.20" width="3.2" height="3.1" fill="#fff"/><rect x="5.30" y="9.20" width="3.2" height="3.1" fill="#fff"/><rect x="9.40" y="9.20" width="3.2" height="3.1" fill="#fff"/></svg>
<div class="t" style="top:608.06px;font-size:15.1px;line-height:15.1px;left:1280.30px;color:#505458;">Company</div>
<svg class="r" style="left:1240.9px;top:631.3599999999999px;" width="14" height="13.5" viewBox="0 0 14 13.5"><rect x="0" y="0" width="14" height="13.5" rx="1" fill="#d4d4d4"/><rect x="1.20" y="1.20" width="3.2" height="3.1" fill="#fff"/><rect x="5.30" y="1.20" width="3.2" height="3.1" fill="#fff"/><rect x="9.40" y="1.20" width="3.2" height="3.1" fill="#fff"/><rect x="1.20" y="9.20" width="3.2" height="3.1" fill="#fff"/><rect x="5.30" y="9.20" width="3.2" height="3.1" fill="#fff"/><rect x="9.40" y="9.20" width="3.2" height="3.1" fill="#fff"/></svg>
<svg class="r" style="left:1257.3px;top:631.3599999999999px;" width="14" height="13.5" viewBox="0 0 14 13.5"><rect x="0" y="0" width="14" height="13.5" rx="1" fill="#d4d4d4"/><rect x="5.30" y="1.20" width="3.2" height="3.1" fill="#fff"/><rect x="9.40" y="1.20" width="3.2" height="3.1" fill="#fff"/><rect x="5.30" y="5.20" width="3.2" height="3.1" fill="#fff"/><rect x="9.40" y="5.20" width="3.2" height="3.1" fill="#fff"/><rect x="5.30" y="9.20" width="3.2" height="3.1" fill="#fff"/><rect x="9.40" y="9.20" width="3.2" height="3.1" fill="#fff"/></svg>
<div class="t" style="top:631.02px;font-size:15.1px;line-height:15.1px;left:1280.30px;color:#505458;">Employee Status</div>
<svg class="r" style="left:1240.9px;top:654.3199999999999px;" width="14" height="13.5" viewBox="0 0 14 13.5"><rect x="0" y="0" width="14" height="13.5" rx="1" fill="#d4d4d4"/><rect x="1.20" y="1.20" width="3.2" height="3.1" fill="#fff"/><rect x="5.30" y="1.20" width="3.2" height="3.1" fill="#fff"/><rect x="9.40" y="1.20" width="3.2" height="3.1" fill="#fff"/><rect x="1.20" y="9.20" width="3.2" height="3.1" fill="#fff"/><rect x="5.30" y="9.20" width="3.2" height="3.1" fill="#fff"/><rect x="9.40" y="9.20" width="3.2" height="3.1" fill="#fff"/></svg>
<svg class="r" style="left:1257.3px;top:654.3199999999999px;" width="14" height="13.5" viewBox="0 0 14 13.5"><rect x="0" y="0" width="14" height="13.5" rx="1" fill="#d4d4d4"/><rect x="5.30" y="1.20" width="3.2" height="3.1" fill="#fff"/><rect x="9.40" y="1.20" width="3.2" height="3.1" fill="#fff"/><rect x="5.30" y="5.20" width="3.2" height="3.1" fill="#fff"/><rect x="9.40" y="5.20" width="3.2" height="3.1" fill="#fff"/><rect x="5.30" y="9.20" width="3.2" height="3.1" fill="#fff"/><rect x="9.40" y="9.20" width="3.2" height="3.1" fill="#fff"/></svg>
<div class="t" style="top:653.98px;font-size:15.1px;line-height:15.1px;left:1280.30px;color:#505458;">End Date</div>
<svg class="r" style="left:1240.9px;top:677.28px;" width="14" height="13.5" viewBox="0 0 14 13.5"><rect x="0" y="0" width="14" height="13.5" rx="1" fill="#d4d4d4"/><rect x="1.20" y="1.20" width="3.2" height="3.1" fill="#fff"/><rect x="5.30" y="1.20" width="3.2" height="3.1" fill="#fff"/><rect x="9.40" y="1.20" width="3.2" height="3.1" fill="#fff"/><rect x="1.20" y="9.20" width="3.2" height="3.1" fill="#fff"/><rect x="5.30" y="9.20" width="3.2" height="3.1" fill="#fff"/><rect x="9.40" y="9.20" width="3.2" height="3.1" fill="#fff"/></svg>
<svg class="r" style="left:1257.3px;top:677.28px;" width="14" height="13.5" viewBox="0 0 14 13.5"><rect x="0" y="0" width="14" height="13.5" rx="1" fill="#d4d4d4"/><rect x="5.30" y="1.20" width="3.2" height="3.1" fill="#fff"/><rect x="9.40" y="1.20" width="3.2" height="3.1" fill="#fff"/><rect x="5.30" y="5.20" width="3.2" height="3.1" fill="#fff"/><rect x="9.40" y="5.20" width="3.2" height="3.1" fill="#fff"/><rect x="5.30" y="9.20" width="3.2" height="3.1" fill="#fff"/><rect x="9.40" y="9.20" width="3.2" height="3.1" fill="#fff"/></svg>
<div class="t" style="top:676.94px;font-size:15.1px;line-height:15.1px;left:1280.30px;color:#505458;">Für Periode</div>
<svg class="r" style="left:1240.9px;top:700.24px;" width="14" height="13.5" viewBox="0 0 14 13.5"><rect x="0" y="0" width="14" height="13.5" rx="1" fill="#d4d4d4"/><rect x="1.20" y="1.20" width="3.2" height="3.1" fill="#fff"/><rect x="5.30" y="1.20" width="3.2" height="3.1" fill="#fff"/><rect x="9.40" y="1.20" width="3.2" height="3.1" fill="#fff"/><rect x="1.20" y="9.20" width="3.2" height="3.1" fill="#fff"/><rect x="5.30" y="9.20" width="3.2" height="3.1" fill="#fff"/><rect x="9.40" y="9.20" width="3.2" height="3.1" fill="#fff"/></svg>
<svg class="r" style="left:1257.3px;top:700.24px;" width="14" height="13.5" viewBox="0 0 14 13.5"><rect x="0" y="0" width="14" height="13.5" rx="1" fill="#d4d4d4"/><rect x="5.30" y="1.20" width="3.2" height="3.1" fill="#fff"/><rect x="9.40" y="1.20" width="3.2" height="3.1" fill="#fff"/><rect x="5.30" y="5.20" width="3.2" height="3.1" fill="#fff"/><rect x="9.40" y="5.20" width="3.2" height="3.1" fill="#fff"/><rect x="5.30" y="9.20" width="3.2" height="3.1" fill="#fff"/><rect x="9.40" y="9.20" width="3.2" height="3.1" fill="#fff"/></svg>
<div class="t" style="top:699.90px;font-size:15.1px;line-height:15.1px;left:1280.30px;color:#505458;">Gender</div>
<svg class="r" style="left:1240.9px;top:723.2px;" width="14" height="13.5" viewBox="0 0 14 13.5"><rect x="0" y="0" width="14" height="13.5" rx="1" fill="#d4d4d4"/><rect x="1.20" y="1.20" width="3.2" height="3.1" fill="#fff"/><rect x="5.30" y="1.20" width="3.2" height="3.1" fill="#fff"/><rect x="9.40" y="1.20" width="3.2" height="3.1" fill="#fff"/><rect x="1.20" y="9.20" width="3.2" height="3.1" fill="#fff"/><rect x="5.30" y="9.20" width="3.2" height="3.1" fill="#fff"/><rect x="9.40" y="9.20" width="3.2" height="3.1" fill="#fff"/></svg>
<svg class="r" style="left:1257.3px;top:723.2px;" width="14" height="13.5" viewBox="0 0 14 13.5"><rect x="0" y="0" width="14" height="13.5" rx="1" fill="#d4d4d4"/><rect x="5.30" y="1.20" width="3.2" height="3.1" fill="#fff"/><rect x="9.40" y="1.20" width="3.2" height="3.1" fill="#fff"/><rect x="5.30" y="5.20" width="3.2" height="3.1" fill="#fff"/><rect x="9.40" y="5.20" width="3.2" height="3.1" fill="#fff"/><rect x="5.30" y="9.20" width="3.2" height="3.1" fill="#fff"/><rect x="9.40" y="9.20" width="3.2" height="3.1" fill="#fff"/></svg>
<div class="t" style="top:722.87px;font-size:15.1px;line-height:15.1px;left:1280.30px;color:#505458;">In Periode</div>
<svg class="r" style="left:1240.9px;top:746.16px;" width="14" height="13.5" viewBox="0 0 14 13.5"><rect x="0" y="0" width="14" height="13.5" rx="1" fill="#d4d4d4"/><rect x="1.20" y="1.20" width="3.2" height="3.1" fill="#fff"/><rect x="5.30" y="1.20" width="3.2" height="3.1" fill="#fff"/><rect x="9.40" y="1.20" width="3.2" height="3.1" fill="#fff"/><rect x="1.20" y="9.20" width="3.2" height="3.1" fill="#fff"/><rect x="5.30" y="9.20" width="3.2" height="3.1" fill="#fff"/><rect x="9.40" y="9.20" width="3.2" height="3.1" fill="#fff"/></svg>
<svg class="r" style="left:1257.3px;top:746.16px;" width="14" height="13.5" viewBox="0 0 14 13.5"><rect x="0" y="0" width="14" height="13.5" rx="1" fill="#d4d4d4"/><rect x="5.30" y="1.20" width="3.2" height="3.1" fill="#fff"/><rect x="9.40" y="1.20" width="3.2" height="3.1" fill="#fff"/><rect x="5.30" y="5.20" width="3.2" height="3.1" fill="#fff"/><rect x="9.40" y="5.20" width="3.2" height="3.1" fill="#fff"/><rect x="5.30" y="9.20" width="3.2" height="3.1" fill="#fff"/><rect x="9.40" y="9.20" width="3.2" height="3.1" fill="#fff"/></svg>
<div class="t" style="top:745.82px;font-size:15.1px;line-height:15.1px;left:1280.30px;color:#505458;">Job Code</div>
<svg class="r" style="left:1240.9px;top:769.1199999999999px;" width="14" height="13.5" viewBox="0 0 14 13.5"><rect x="0" y="0" width="14" height="13.5" rx="1" fill="#d4d4d4"/><rect x="1.20" y="1.20" width="3.2" height="3.1" fill="#fff"/><rect x="5.30" y="1.20" width="3.2" height="3.1" fill="#fff"/><rect x="9.40" y="1.20" width="3.2" height="3.1" fill="#fff"/><rect x="1.20" y="9.20" width="3.2" height="3.1" fill="#fff"/><rect x="5.30" y="9.20" width="3.2" height="3.1" fill="#fff"/><rect x="9.40" y="9.20" width="3.2" height="3.1" fill="#fff"/></svg>
<svg class="r" style="left:1257.3px;top:769.1199999999999px;" width="14" height="13.5" viewBox="0 0 14 13.5"><rect x="0" y="0" width="14" height="13.5" rx="1" fill="#d4d4d4"/><rect x="5.30" y="1.20" width="3.2" height="3.1" fill="#fff"/><rect x="9.40" y="1.20" width="3.2" height="3.1" fill="#fff"/><rect x="5.30" y="5.20" width="3.2" height="3.1" fill="#fff"/><rect x="9.40" y="5.20" width="3.2" height="3.1" fill="#fff"/><rect x="5.30" y="9.20" width="3.2" height="3.1" fill="#fff"/><rect x="9.40" y="9.20" width="3.2" height="3.1" fill="#fff"/></svg>
<div class="t" style="top:768.78px;font-size:15.1px;line-height:15.1px;left:1280.30px;color:#505458;">Nationality</div>
<svg class="r" style="left:1240.9px;top:792.0799999999999px;" width="14" height="13.5" viewBox="0 0 14 13.5"><rect x="0" y="0" width="14" height="13.5" rx="1" fill="#d4d4d4"/><rect x="1.20" y="1.20" width="3.2" height="3.1" fill="#fff"/><rect x="5.30" y="1.20" width="3.2" height="3.1" fill="#fff"/><rect x="9.40" y="1.20" width="3.2" height="3.1" fill="#fff"/><rect x="1.20" y="9.20" width="3.2" height="3.1" fill="#fff"/><rect x="5.30" y="9.20" width="3.2" height="3.1" fill="#fff"/><rect x="9.40" y="9.20" width="3.2" height="3.1" fill="#fff"/></svg>
<svg class="r" style="left:1257.3px;top:792.0799999999999px;" width="14" height="13.5" viewBox="0 0 14 13.5"><rect x="0" y="0" width="14" height="13.5" rx="1" fill="#d4d4d4"/><rect x="5.30" y="1.20" width="3.2" height="3.1" fill="#fff"/><rect x="9.40" y="1.20" width="3.2" height="3.1" fill="#fff"/><rect x="5.30" y="5.20" width="3.2" height="3.1" fill="#fff"/><rect x="9.40" y="5.20" width="3.2" height="3.1" fill="#fff"/><rect x="5.30" y="9.20" width="3.2" height="3.1" fill="#fff"/><rect x="9.40" y="9.20" width="3.2" height="3.1" fill="#fff"/></svg>
<div class="t" style="top:791.74px;font-size:15.1px;line-height:15.1px;left:1280.30px;color:#505458;">Personal ID</div>
<svg class="r" style="left:1240.9px;top:815.04px;" width="14" height="13.5" viewBox="0 0 14 13.5"><rect x="0" y="0" width="14" height="13.5" rx="1" fill="#d4d4d4"/><rect x="1.20" y="1.20" width="3.2" height="3.1" fill="#fff"/><rect x="5.30" y="1.20" width="3.2" height="3.1" fill="#fff"/><rect x="9.40" y="1.20" width="3.2" height="3.1" fill="#fff"/><rect x="1.20" y="9.20" width="3.2" height="3.1" fill="#fff"/><rect x="5.30" y="9.20" width="3.2" height="3.1" fill="#fff"/><rect x="9.40" y="9.20" width="3.2" height="3.1" fill="#fff"/></svg>
<svg class="r" style="left:1257.3px;top:815.04px;" width="14" height="13.5" viewBox="0 0 14 13.5"><rect x="0" y="0" width="14" height="13.5" rx="1" fill="#d4d4d4"/><rect x="5.30" y="1.20" width="3.2" height="3.1" fill="#fff"/><rect x="9.40" y="1.20" width="3.2" height="3.1" fill="#fff"/><rect x="5.30" y="5.20" width="3.2" height="3.1" fill="#fff"/><rect x="9.40" y="5.20" width="3.2" height="3.1" fill="#fff"/><rect x="5.30" y="9.20" width="3.2" height="3.1" fill="#fff"/><rect x="9.40" y="9.20" width="3.2" height="3.1" fill="#fff"/></svg>
<div class="t" style="top:814.70px;font-size:15.1px;line-height:15.1px;left:1280.30px;color:#505458;">Pay Grade</div>
<svg class="r" style="left:1240.9px;top:838.0px;" width="14" height="13.5" viewBox="0 0 14 13.5"><rect x="0" y="0" width="14" height="13.5" rx="1" fill="#d4d4d4"/><rect x="1.20" y="1.20" width="3.2" height="3.1" fill="#fff"/><rect x="5.30" y="1.20" width="3.2" height="3.1" fill="#fff"/><rect x="9.40" y="1.20" width="3.2" height="3.1" fill="#fff"/><rect x="1.20" y="9.20" width="3.2" height="3.1" fill="#fff"/><rect x="5.30" y="9.20" width="3.2" height="3.1" fill="#fff"/><rect x="9.40" y="9.20" width="3.2" height="3.1" fill="#fff"/></svg>
<svg class="r" style="left:1257.3px;top:838.0px;" width="14" height="13.5" viewBox="0 0 14 13.5"><rect x="0" y="0" width="14" height="13.5" rx="1" fill="#d4d4d4"/><rect x="5.30" y="1.20" width="3.2" height="3.1" fill="#fff"/><rect x="9.40" y="1.20" width="3.2" height="3.1" fill="#fff"/><rect x="5.30" y="5.20" width="3.2" height="3.1" fill="#fff"/><rect x="9.40" y="5.20" width="3.2" height="3.1" fill="#fff"/><rect x="5.30" y="9.20" width="3.2" height="3.1" fill="#fff"/><rect x="9.40" y="9.20" width="3.2" height="3.1" fill="#fff"/></svg>
<div class="t" style="top:837.66px;font-size:15.1px;line-height:15.1px;left:1280.30px;color:#505458;">Pay Group</div>
<svg class="r" style="left:1240.9px;top:860.96px;" width="14" height="13.5" viewBox="0 0 14 13.5"><rect x="0" y="0" width="14" height="13.5" rx="1" fill="#d4d4d4"/><rect x="1.20" y="1.20" width="3.2" height="3.1" fill="#fff"/><rect x="5.30" y="1.20" width="3.2" height="3.1" fill="#fff"/><rect x="9.40" y="1.20" width="3.2" height="3.1" fill="#fff"/><rect x="1.20" y="9.20" width="3.2" height="3.1" fill="#fff"/><rect x="5.30" y="9.20" width="3.2" height="3.1" fill="#fff"/><rect x="9.40" y="9.20" width="3.2" height="3.1" fill="#fff"/></svg>
<svg class="r" style="left:1257.3px;top:860.96px;" width="14" height="13.5" viewBox="0 0 14 13.5"><rect x="0" y="0" width="14" height="13.5" rx="1" fill="#d4d4d4"/><rect x="5.30" y="1.20" width="3.2" height="3.1" fill="#fff"/><rect x="9.40" y="1.20" width="3.2" height="3.1" fill="#fff"/><rect x="5.30" y="5.20" width="3.2" height="3.1" fill="#fff"/><rect x="9.40" y="5.20" width="3.2" height="3.1" fill="#fff"/><rect x="5.30" y="9.20" width="3.2" height="3.1" fill="#fff"/><rect x="9.40" y="9.20" width="3.2" height="3.1" fill="#fff"/></svg>
<div class="t" style="top:860.62px;font-size:15.1px;line-height:15.1px;left:1280.30px;color:#505458;">Position</div>
<svg class="r" style="left:1240.9px;top:883.92px;" width="14" height="13.5" viewBox="0 0 14 13.5"><rect x="0" y="0" width="14" height="13.5" rx="1" fill="#d4d4d4"/><rect x="1.20" y="1.20" width="3.2" height="3.1" fill="#fff"/><rect x="5.30" y="1.20" width="3.2" height="3.1" fill="#fff"/><rect x="9.40" y="1.20" width="3.2" height="3.1" fill="#fff"/><rect x="1.20" y="9.20" width="3.2" height="3.1" fill="#fff"/><rect x="5.30" y="9.20" width="3.2" height="3.1" fill="#fff"/><rect x="9.40" y="9.20" width="3.2" height="3.1" fill="#fff"/></svg>
<svg class="r" style="left:1257.3px;top:883.92px;" width="14" height="13.5" viewBox="0 0 14 13.5"><rect x="0" y="0" width="14" height="13.5" rx="1" fill="#d4d4d4"/><rect x="5.30" y="1.20" width="3.2" height="3.1" fill="#fff"/><rect x="9.40" y="1.20" width="3.2" height="3.1" fill="#fff"/><rect x="5.30" y="5.20" width="3.2" height="3.1" fill="#fff"/><rect x="9.40" y="5.20" width="3.2" height="3.1" fill="#fff"/><rect x="5.30" y="9.20" width="3.2" height="3.1" fill="#fff"/><rect x="9.40" y="9.20" width="3.2" height="3.1" fill="#fff"/></svg>
<div class="t" style="top:883.58px;font-size:15.1px;line-height:15.1px;left:1280.30px;color:#505458;">Recordmode</div>
<svg class="r" style="left:1240.9px;top:906.88px;" width="14" height="13.5" viewBox="0 0 14 13.5"><rect x="0" y="0" width="14" height="13.5" rx="1" fill="#d4d4d4"/><rect x="1.20" y="1.20" width="3.2" height="3.1" fill="#fff"/><rect x="5.30" y="1.20" width="3.2" height="3.1" fill="#fff"/><rect x="9.40" y="1.20" width="3.2" height="3.1" fill="#fff"/><rect x="1.20" y="9.20" width="3.2" height="3.1" fill="#fff"/><rect x="5.30" y="9.20" width="3.2" height="3.1" fill="#fff"/><rect x="9.40" y="9.20" width="3.2" height="3.1" fill="#fff"/></svg>
<svg class="r" style="left:1257.3px;top:906.88px;" width="14" height="13.5" viewBox="0 0 14 13.5"><rect x="0" y="0" width="14" height="13.5" rx="1" fill="#d4d4d4"/><rect x="5.30" y="1.20" width="3.2" height="3.1" fill="#fff"/><rect x="9.40" y="1.20" width="3.2" height="3.1" fill="#fff"/><rect x="5.30" y="5.20" width="3.2" height="3.1" fill="#fff"/><rect x="9.40" y="5.20" width="3.2" height="3.1" fill="#fff"/><rect x="5.30" y="9.20" width="3.2" height="3.1" fill="#fff"/><rect x="9.40" y="9.20" width="3.2" height="3.1" fill="#fff"/></svg>
<div class="t" style="top:906.54px;font-size:15.1px;line-height:15.1px;left:1280.30px;color:#505458;">Request</div>
<svg class="r" style="left:1240.9px;top:929.8399999999999px;" width="14" height="13.5" viewBox="0 0 14 13.5"><rect x="0" y="0" width="14" height="13.5" rx="1" fill="#d4d4d4"/><rect x="1.20" y="1.20" width="3.2" height="3.1" fill="#fff"/><rect x="5.30" y="1.20" width="3.2" height="3.1" fill="#fff"/><rect x="9.40" y="1.20" width="3.2" height="3.1" fill="#fff"/><rect x="1.20" y="9.20" width="3.2" height="3.1" fill="#fff"/><rect x="5.30" y="9.20" width="3.2" height="3.1" fill="#fff"/><rect x="9.40" y="9.20" width="3.2" height="3.1" fill="#fff"/></svg>
<svg class="r" style="left:1257.3px;top:929.8399999999999px;" width="14" height="13.5" viewBox="0 0 14 13.5"><rect x="0" y="0" width="14" height="13.5" rx="1" fill="#d4d4d4"/><rect x="5.30" y="1.20" width="3.2" height="3.1" fill="#fff"/><rect x="9.40" y="1.20" width="3.2" height="3.1" fill="#fff"/><rect x="5.30" y="5.20" width="3.2" height="3.1" fill="#fff"/><rect x="9.40" y="5.20" width="3.2" height="3.1" fill="#fff"/><rect x="5.30" y="9.20" width="3.2" height="3.1" fill="#fff"/><rect x="9.40" y="9.20" width="3.2" height="3.1" fill="#fff"/></svg>
<div class="t" style="top:929.50px;font-size:15.1px;line-height:15.1px;left:1280.30px;color:#505458;">Flag: Snapshot</div>
<svg class="r" style="left:1240.9px;top:952.8px;" width="14" height="13.5" viewBox="0 0 14 13.5"><rect x="0" y="0" width="14" height="13.5" rx="1" fill="#d4d4d4"/><rect x="1.20" y="1.20" width="3.2" height="3.1" fill="#fff"/><rect x="5.30" y="1.20" width="3.2" height="3.1" fill="#fff"/><rect x="9.40" y="1.20" width="3.2" height="3.1" fill="#fff"/><rect x="1.20" y="9.20" width="3.2" height="3.1" fill="#fff"/><rect x="5.30" y="9.20" width="3.2" height="3.1" fill="#fff"/><rect x="9.40" y="9.20" width="3.2" height="3.1" fill="#fff"/></svg>
<svg class="r" style="left:1257.3px;top:952.8px;" width="14" height="13.5" viewBox="0 0 14 13.5"><rect x="0" y="0" width="14" height="13.5" rx="1" fill="#d4d4d4"/><rect x="5.30" y="1.20" width="3.2" height="3.1" fill="#fff"/><rect x="9.40" y="1.20" width="3.2" height="3.1" fill="#fff"/><rect x="5.30" y="5.20" width="3.2" height="3.1" fill="#fff"/><rect x="9.40" y="5.20" width="3.2" height="3.1" fill="#fff"/><rect x="5.30" y="9.20" width="3.2" height="3.1" fill="#fff"/><rect x="9.40" y="9.20" width="3.2" height="3.1" fill="#fff"/></svg>
<div class="t" style="top:952.46px;font-size:15.1px;line-height:15.1px;left:1280.30px;color:#505458;">Start Date</div>
<svg class="r" style="left:1240.9px;top:975.76px;" width="14" height="13.5" viewBox="0 0 14 13.5"><rect x="0" y="0" width="14" height="13.5" rx="1" fill="#d4d4d4"/><rect x="1.20" y="1.20" width="3.2" height="3.1" fill="#fff"/><rect x="5.30" y="1.20" width="3.2" height="3.1" fill="#fff"/><rect x="9.40" y="1.20" width="3.2" height="3.1" fill="#fff"/><rect x="1.20" y="9.20" width="3.2" height="3.1" fill="#fff"/><rect x="5.30" y="9.20" width="3.2" height="3.1" fill="#fff"/><rect x="9.40" y="9.20" width="3.2" height="3.1" fill="#fff"/></svg>
<svg class="r" style="left:1257.3px;top:975.76px;" width="14" height="13.5" viewBox="0 0 14 13.5"><rect x="0" y="0" width="14" height="13.5" rx="1" fill="#d4d4d4"/><rect x="5.30" y="1.20" width="3.2" height="3.1" fill="#fff"/><rect x="9.40" y="1.20" width="3.2" height="3.1" fill="#fff"/><rect x="5.30" y="5.20" width="3.2" height="3.1" fill="#fff"/><rect x="9.40" y="5.20" width="3.2" height="3.1" fill="#fff"/><rect x="5.30" y="9.20" width="3.2" height="3.1" fill="#fff"/><rect x="9.40" y="9.20" width="3.2" height="3.1" fill="#fff"/></svg>
<div class="t" style="top:975.42px;font-size:15.1px;line-height:15.1px;left:1280.30px;color:#505458;">Update Date</div>
<svg class="r" style="left:1240.9px;top:998.72px;" width="14" height="13.5" viewBox="0 0 14 13.5"><rect x="0" y="0" width="14" height="13.5" rx="1" fill="#d4d4d4"/><rect x="1.20" y="1.20" width="3.2" height="3.1" fill="#fff"/><rect x="5.30" y="1.20" width="3.2" height="3.1" fill="#fff"/><rect x="9.40" y="1.20" width="3.2" height="3.1" fill="#fff"/><rect x="1.20" y="9.20" width="3.2" height="3.1" fill="#fff"/><rect x="5.30" y="9.20" width="3.2" height="3.1" fill="#fff"/><rect x="9.40" y="9.20" width="3.2" height="3.1" fill="#fff"/></svg>
<svg class="r" style="left:1257.3px;top:998.72px;" width="14" height="13.5" viewBox="0 0 14 13.5"><rect x="0" y="0" width="14" height="13.5" rx="1" fill="#d4d4d4"/><rect x="5.30" y="1.20" width="3.2" height="3.1" fill="#fff"/><rect x="9.40" y="1.20" width="3.2" height="3.1" fill="#fff"/><rect x="5.30" y="5.20" width="3.2" height="3.1" fill="#fff"/><rect x="9.40" y="5.20" width="3.2" height="3.1" fill="#fff"/><rect x="5.30" y="9.20" width="3.2" height="3.1" fill="#fff"/><rect x="9.40" y="9.20" width="3.2" height="3.1" fill="#fff"/></svg>
<div class="t" style="top:998.38px;font-size:15.1px;line-height:15.1px;left:1280.30px;color:#505458;">User ID</div>
<svg class="r" style="left:1240.9px;top:1021.6800000000001px;" width="14" height="13.5" viewBox="0 0 14 13.5"><rect x="0" y="0" width="14" height="13.5" rx="1" fill="#d4d4d4"/><rect x="1.20" y="1.20" width="3.2" height="3.1" fill="#fff"/><rect x="5.30" y="1.20" width="3.2" height="3.1" fill="#fff"/><rect x="9.40" y="1.20" width="3.2" height="3.1" fill="#fff"/><rect x="1.20" y="9.20" width="3.2" height="3.1" fill="#fff"/><rect x="5.30" y="9.20" width="3.2" height="3.1" fill="#fff"/><rect x="9.40" y="9.20" width="3.2" height="3.1" fill="#fff"/></svg>
<svg class="r" style="left:1257.3px;top:1021.6800000000001px;" width="14" height="13.5" viewBox="0 0 14 13.5"><rect x="0" y="0" width="14" height="13.5" rx="1" fill="#d4d4d4"/><rect x="5.30" y="1.20" width="3.2" height="3.1" fill="#fff"/><rect x="9.40" y="1.20" width="3.2" height="3.1" fill="#fff"/><rect x="5.30" y="5.20" width="3.2" height="3.1" fill="#fff"/><rect x="9.40" y="5.20" width="3.2" height="3.1" fill="#fff"/><rect x="5.30" y="9.20" width="3.2" height="3.1" fill="#fff"/><rect x="9.40" y="9.20" width="3.2" height="3.1" fill="#fff"/></svg>
<div class="t" style="top:1021.35px;font-size:15.1px;line-height:15.1px;left:1280.30px;color:#505458;">Flag: ohne Fortschre</div>
<svg class="r" style="left:1240.9px;top:1044.6399999999999px;" width="14" height="13.5" viewBox="0 0 14 13.5"><rect x="0" y="0" width="14" height="13.5" rx="1" fill="#4a6f94"/><rect x="1.20" y="1.20" width="3.2" height="3.1" fill="#fff"/><rect x="5.30" y="1.20" width="3.2" height="3.1" fill="#fff"/><rect x="9.40" y="1.20" width="3.2" height="3.1" fill="#fff"/><rect x="1.20" y="9.20" width="3.2" height="3.1" fill="#fff"/><rect x="5.30" y="9.20" width="3.2" height="3.1" fill="#fff"/><rect x="9.40" y="9.20" width="3.2" height="3.1" fill="#fff"/></svg>
<svg class="r" style="left:1257.3px;top:1044.6399999999999px;" width="14" height="13.5" viewBox="0 0 14 13.5"><rect x="0" y="0" width="14" height="13.5" rx="1" fill="#d4d4d4"/><rect x="5.30" y="1.20" width="3.2" height="3.1" fill="#fff"/><rect x="9.40" y="1.20" width="3.2" height="3.1" fill="#fff"/><rect x="5.30" y="5.20" width="3.2" height="3.1" fill="#fff"/><rect x="9.40" y="5.20" width="3.2" height="3.1" fill="#fff"/><rect x="5.30" y="9.20" width="3.2" height="3.1" fill="#fff"/><rect x="9.40" y="9.20" width="3.2" height="3.1" fill="#fff"/></svg>
<div class="t" style="top:1044.30px;font-size:15.1px;line-height:15.1px;left:1280.30px;color:#505458;">Kalenderjahr/-monat</div>
<svg class="r" style="left:1537px;top:221px;" width="18" height="18" viewBox="0 0 18 18"><path d="M3,15 L13.5,4.5" stroke="#fff" stroke-width="2"/><path d="M12,2 L16,6 L14.5,7.5 L10.5,3.5Z" fill="#fff"/><path d="M5.5,5.5 L15,15" stroke="#fff" stroke-width="2.2"/><path d="M2,4 C2,2 4,1 5.5,2 L4,3.5 L5,5 L6.5,3.5 C7.5,5 6.5,7 4.5,7 C3,7 2,5.5 2,4Z" fill="#fff"/><circle cx="15.5" cy="15.5" r="1" fill="#427cac"/></svg>
<svg class="r" style="left:1924px;top:222px;" width="18" height="17" viewBox="0 0 18 17"><path d="M6,9 L11.5,2 L17,7.5 L11,12.5Z" fill="#eaf3ff"/><path d="M9.5,6.5 L12,9 M11,5 L13.5,7.5" stroke="#2f5f8a" stroke-width="1.3"/><path d="M6,9 L2.5,13 C1.5,14.5 3,16 4.5,15 L9,11.5" fill="none" stroke="#eaf3ff" stroke-width="1.8"/><circle cx="16" cy="12.5" r="1.3" fill="#eaf3ff"/></svg>
<svg class="r" style="left:1924px;top:271px;" width="16" height="17" viewBox="0 0 16 17"><circle cx="2.5" cy="3" r="1.9" fill="#fff"/><circle cx="2.5" cy="8.5" r="1.9" fill="#fff"/><circle cx="2.5" cy="14" r="1.9" fill="#fff"/><path d="M6.5,3H15M6.5,8.5H15M6.5,14H15" stroke="#fff" stroke-width="1.5"/></svg>
<svg class="r" style="left:1928px;top:312px;" width="15" height="15" viewBox="0 0 15 15"><path d="M2,13 L2.8,10 L10.5,2.3 L12.7,4.5 L5,12.2Z M9.3,3.5 L11.5,5.7" fill="none" stroke="#6a7a8a" stroke-width="1.2"/></svg>
<svg class="r" style="left:1534.5px;top:376.425px;" width="13" height="7.15" viewBox="0 0 13 7.15"><polyline points="1,1 6.5,6.15 12,1" fill="none" stroke="#3a4a5a" stroke-width="1.9"/></svg>
<div class="t" style="top:373.78px;font-size:13.2px;line-height:13.2px;left:1560.00px;font-weight:700;color:#3b3f44;">Rows</div>
<svg class="r" style="left:1928.5px;top:377px;" width="4.5" height="4.5" viewBox="0 0 4.5 4.5"><circle cx="2.2" cy="2.2" r="2" fill="#8a8f94"/></svg>
<svg class="r" style="left:1934.0px;top:377px;" width="4.5" height="4.5" viewBox="0 0 4.5 4.5"><circle cx="2.2" cy="2.2" r="2" fill="#8a8f94"/></svg>
<svg class="r" style="left:1939.5px;top:377px;" width="4.5" height="4.5" viewBox="0 0 4.5 4.5"><circle cx="2.2" cy="2.2" r="2" fill="#8a8f94"/></svg>
<div class="r" style="left:1561px;top:399px;width:385px;height:32px;background:#f5f5f5;border:1px solid #e4e4e4;box-sizing:border-box;"></div>
<svg class="r" style="left:1569.5px;top:408.0px;" width="3" height="3" viewBox="0 0 3 3"><circle cx="1.5" cy="1.5" r="1.3" fill="#5a6670"/></svg>
<svg class="r" style="left:1569.5px;top:413.5px;" width="3" height="3" viewBox="0 0 3 3"><circle cx="1.5" cy="1.5" r="1.3" fill="#5a6670"/></svg>
<svg class="r" style="left:1569.5px;top:419.0px;" width="3" height="3" viewBox="0 0 3 3"><circle cx="1.5" cy="1.5" r="1.3" fill="#5a6670"/></svg>
<div class="t" style="top:407.65px;font-size:15px;line-height:15px;left:1587.50px;color:#4a6380;">Kalenderjahr/-monat</div>
<svg class="r" style="left:1921.5px;top:406.5px;" width="17" height="17" viewBox="0 0 17 17"><circle cx="8.5" cy="8.5" r="7.3" fill="none" stroke="#5a6670" stroke-width="1.3"/><path d="M5.5,5.5 L11.5,11.5 M11.5,5.5 L5.5,11.5" stroke="#5a6670" stroke-width="1.3"/></svg>
<div class="r" style="left:1561px;top:435.5px;width:385px;height:32px;background:#f5f5f5;border:1px solid #e4e4e4;box-sizing:border-box;"></div>
<svg class="r" style="left:1569.5px;top:444.5px;" width="3" height="3" viewBox="0 0 3 3"><circle cx="1.5" cy="1.5" r="1.3" fill="#5a6670"/></svg>
<svg class="r" style="left:1569.5px;top:450.0px;" width="3" height="3" viewBox="0 0 3 3"><circle cx="1.5" cy="1.5" r="1.3" fill="#5a6670"/></svg>
<svg class="r" style="left:1569.5px;top:455.5px;" width="3" height="3" viewBox="0 0 3 3"><circle cx="1.5" cy="1.5" r="1.3" fill="#5a6670"/></svg>
<div class="t" style="top:444.15px;font-size:15px;line-height:15px;left:1587.50px;color:#4a6380;">Business Unit</div>
<svg class="r" style="left:1921.5px;top:443.0px;" width="17" height="17" viewBox="0 0 17 17"><circle cx="8.5" cy="8.5" r="7.3" fill="none" stroke="#5a6670" stroke-width="1.3"/><path d="M5.5,5.5 L11.5,11.5 M11.5,5.5 L5.5,11.5" stroke="#5a6670" stroke-width="1.3"/></svg>
<svg class="r" style="left:1534.5px;top:491.225px;" width="13" height="7.15" viewBox="0 0 13 7.15"><polyline points="1,1 6.5,6.15 12,1" fill="none" stroke="#3a4a5a" stroke-width="1.9"/></svg>
<div class="t" style="top:488.78px;font-size:13.2px;line-height:13.2px;left:1560.00px;font-weight:700;color:#3b3f44;">Columns</div>
<svg class="r" style="left:1928.5px;top:492px;" width="4.5" height="4.5" viewBox="0 0 4.5 4.5"><circle cx="2.2" cy="2.2" r="2" fill="#8a8f94"/></svg>
<svg class="r" style="left:1934.0px;top:492px;" width="4.5" height="4.5" viewBox="0 0 4.5 4.5"><circle cx="2.2" cy="2.2" r="2" fill="#8a8f94"/></svg>
<svg class="r" style="left:1939.5px;top:492px;" width="4.5" height="4.5" viewBox="0 0 4.5 4.5"><circle cx="2.2" cy="2.2" r="2" fill="#8a8f94"/></svg>
<div class="r" style="left:1561px;top:514px;width:385px;height:53px;background:#f5f5f5;border:1px solid #e4e4e4;box-sizing:border-box;"></div>
<svg class="r" style="left:1569.5px;top:533.5px;" width="3" height="3" viewBox="0 0 3 3"><circle cx="1.5" cy="1.5" r="1.3" fill="#5a6670"/></svg>
<svg class="r" style="left:1569.5px;top:539.0px;" width="3" height="3" viewBox="0 0 3 3"><circle cx="1.5" cy="1.5" r="1.3" fill="#5a6670"/></svg>
<svg class="r" style="left:1569.5px;top:544.5px;" width="3" height="3" viewBox="0 0 3 3"><circle cx="1.5" cy="1.5" r="1.3" fill="#5a6670"/></svg>
<div class="t" style="top:523.73px;font-size:14.2px;line-height:14.2px;left:1587.50px;color:#4a6380;">Measures</div>
<div class="t" style="top:547.08px;font-size:10.5px;line-height:10.5px;left:1587.50px;color:#7a7e82;">2 Members</div>
<svg class="r" style="left:1926.925px;top:531.0px;" width="7.15" height="13" viewBox="0 0 7.15 13"><polyline points="1,1 6.15,6.5 1,12" fill="none" stroke="#6a737c" stroke-width="1.3"/></svg>
<svg class="r" style="left:11px;top:14px;" width="12" height="7" viewBox="0 0 12 7"><polyline points="1,6 6,1 11,6" fill="none" stroke="#3d4a57" stroke-width="1.6"/></svg>
<svg class="r" style="left:50px;top:33px;" width="16" height="16" viewBox="0 0 16 16"><path d="M6.5,1.5 C4,0.5 1,2.5 1.5,5.5 L3.5,3.5 L5.5,5 L4.5,7.5 C6,8 7,7.5 8,7 L13.5,13.5 C14,14.5 15,14 15,13 L9,6.5 C9.5,4.5 8.5,2 6.5,1.5Z" fill="none" stroke="#3d4a57" stroke-width="1.2"/></svg>
<svg class="r" style="left:72.0px;top:38.525px;" width="9" height="4.95" viewBox="0 0 9 4.95"><polyline points="0.5,0.5 4.5,4.45 8.5,0.5" fill="none" stroke="#7d8790" stroke-width="1.1"/></svg>
<svg class="r" style="left:108px;top:34px;" width="14" height="14" viewBox="0 0 14 14"><path d="M1,1 H10.5 L13,3.5 V13 H1Z" fill="none" stroke="#3d4a57" stroke-width="1.2"/><path d="M3.5,1 V5 H10 V1 M3.5,13 V8.5 H10.5 V13" fill="none" stroke="#3d4a57" stroke-width="1.1"/><rect x="5.5" y="10" width="2" height="2" fill="#3d4a57"/></svg>
<svg class="r" style="left:130.0px;top:38.525px;" width="9" height="4.95" viewBox="0 0 9 4.95"><polyline points="0.5,0.5 4.5,4.45 8.5,0.5" fill="none" stroke="#7d8790" stroke-width="1.1"/></svg>
<svg class="r" style="left:166px;top:33px;" width="15" height="16" viewBox="0 0 15 16"><path d="M4,3.5 V1 H14 V12 H11" fill="none" stroke="#3d4a57" stroke-width="1.1"/><path d="M3,3.5 H11 V15 H1 V5.5Z" fill="none" stroke="#3d4a57" stroke-width="1.1"/><path d="M3.5,9.5h5M3.5,12h5" stroke="#3d4a57" stroke-width="1"/></svg>
<svg class="r" style="left:188.0px;top:38.525px;" width="9" height="4.95" viewBox="0 0 9 4.95"><polyline points="0.5,0.5 4.5,4.45 8.5,0.5" fill="none" stroke="#7d8790" stroke-width="1.1"/></svg>
<svg class="r" style="left:223px;top:33px;" width="17" height="17" viewBox="0 0 17 17"><circle cx="13.5" cy="3.5" r="2.6" fill="none" stroke="#3d4a57" stroke-width="1.2"/><circle cx="3.5" cy="8.5" r="2.6" fill="none" stroke="#3d4a57" stroke-width="1.2"/><circle cx="13.5" cy="13.5" r="2.6" fill="none" stroke="#3d4a57" stroke-width="1.2"/><path d="M5.8,7.3 L11.2,4.7 M5.8,9.7 L11.2,12.3" stroke="#3d4a57" stroke-width="1.2"/></svg>
<svg class="r" style="left:247.0px;top:38.525px;" width="9" height="4.95" viewBox="0 0 9 4.95"><polyline points="0.5,0.5 4.5,4.45 8.5,0.5" fill="none" stroke="#7d8790" stroke-width="1.1"/></svg>
<div class="r" style="left:281px;top:28px;width:35.5px;height:26.5px;background:#3d79ad;border-radius:3px;"></div>
<svg class="r" style="left:290px;top:33.5px;" width="17" height="16" viewBox="0 0 17 16"><path d="M4,1 L7.2,6.5 H0.8Z" fill="none" stroke="#fff" stroke-width="1.2"/><circle cx="12.5" cy="4" r="3" fill="none" stroke="#fff" stroke-width="1.2"/><rect x="1" y="9" width="5.5" height="6" fill="none" stroke="#fff" stroke-width="1.2"/><path d="M9,10h7M9,12.5h7M9,15h7" stroke="#fff" stroke-width="1.2"/></svg>
<svg class="r" style="left:333.09999999999997px;top:32.2px;" width="17.6" height="17.6" viewBox="0 0 17.6 17.6"><circle cx="8.8" cy="8.8" r="7.8" fill="none" stroke="#3d4a57" stroke-width="1.2"/><circle cx="8.8" cy="4.6" r="1.2" fill="#3d4a57"/><path d="M7.0,7.3 H9.4 V12.8 M6.8,13.0 H10.8" fill="none" stroke="#3d4a57" stroke-width="1.5"/></svg>
<svg class="r" style="left:385px;top:33px;" width="16" height="16" viewBox="0 0 16 16"><path d="M1,0.5 V15.5 M3,3h5 M3,7h7 M3,11.5h11" stroke="#3d4a57" stroke-width="1.5"/></svg>
<svg class="r" style="left:427px;top:33px;" width="16" height="16" viewBox="0 0 16 16"><path d="M1,1V15M5.3,1V15M9.6,1V15M14,1V15" stroke="#3d4a57" stroke-width="1.1"/><path d="M1,5H14M1,9H14M1,13H14" stroke="#3d4a57" stroke-width="1.1"/><path d="M1,2H14" stroke="#3d4a57" stroke-width="1.1" stroke-dasharray="1.4,1.4"/></svg>
<svg class="r" style="left:468px;top:34px;" width="15" height="15" viewBox="0 0 15 15"><path d="M7.5,0 V15 M0,7.5 H15" stroke="#3d4a57" stroke-width="1.9"/></svg>
<svg class="r" style="left:490.5px;top:38.525px;" width="9" height="4.95" viewBox="0 0 9 4.95"><polyline points="0.5,0.5 4.5,4.45 8.5,0.5" fill="none" stroke="#7d8790" stroke-width="1.1"/></svg>
<svg class="r" style="left:534px;top:33px;" width="17" height="17" viewBox="0 0 17 17"><path d="M8.5,1 V15 M4,15.5 H13 M2,4 H15 M8.5,3 L8.5,3" stroke="#3d4a57" stroke-width="1.3"/><path d="M3.5,4 L1,9.5 H6Z M13.5,4 L11,9.5 H16Z" fill="none" stroke="#3d4a57" stroke-width="1"/></svg>
<svg class="r" style="left:576px;top:33px;" width="17" height="17" viewBox="0 0 17 17"><path d="M10,1 L3,4.5 L10,8 M1,10.5h8 M1,13.5h8 M9,9 L16,12 L9,15" fill="none" stroke="#3d4a57" stroke-width="1.2"/><path d="M12,1h4M12,4h4M15,0L13,5" stroke="#3d4a57" stroke-width="1"/></svg>
<svg class="r" style="left:619px;top:33px;" width="18" height="17" viewBox="0 0 18 17"><rect x="1" y="6" width="4.5" height="5" fill="none" stroke="#3d4a57" stroke-width="1.1"/><rect x="11" y="1" width="5.5" height="4" fill="none" stroke="#3d4a57" stroke-width="1.1"/><rect x="11" y="6.5" width="5.5" height="4" fill="none" stroke="#3d4a57" stroke-width="1.1"/><rect x="11" y="12" width="5.5" height="4" fill="none" stroke="#3d4a57" stroke-width="1.1"/><path d="M5.5,8.5 H8.5 V3 H11 M8.5,8.5 H11 M8.5,8.5 V14 H11" fill="none" stroke="#3d4a57" stroke-width="1.1"/></svg>
<svg class="r" style="left:661px;top:34px;" width="18" height="14" viewBox="0 0 18 14"><path d="M1.5,12.5 A7.5,7.5 0 0 1 16.5,12.5" fill="none" stroke="#3d4a57" stroke-width="1.6"/><path d="M9,12 L12.5,6" stroke="#3d4a57" stroke-width="1.8"/></svg>
<svg class="r" style="left:686.0px;top:38.525px;" width="9" height="4.95" viewBox="0 0 9 4.95"><polyline points="0.5,0.5 4.5,4.45 8.5,0.5" fill="none" stroke="#7d8790" stroke-width="1.1"/></svg>
<svg class="r" style="left:728px;top:33px;" width="16" height="16" viewBox="0 0 16 16"><path d="M13.5,9 A6,6 0 1 1 11.5,3.5" fill="none" stroke="#3d4a57" stroke-width="1.3"/><path d="M9.5,0.5 L12.5,3.5 L9,5.5" fill="none" stroke="#3d4a57" stroke-width="1.3"/></svg>
<svg class="r" style="left:750.5px;top:38.525px;" width="9" height="4.95" viewBox="0 0 9 4.95"><polyline points="0.5,0.5 4.5,4.45 8.5,0.5" fill="none" stroke="#7d8790" stroke-width="1.1"/></svg>
<svg class="r" style="left:786px;top:32.5px;" width="15" height="16" viewBox="0 0 15 16"><text x="0" y="13" font-size="15" font-family="Liberation Sans" fill="#3d4a57">{ }</text></svg>
<svg class="r" style="left:810.0px;top:38.525px;" width="9" height="4.95" viewBox="0 0 9 4.95"><polyline points="0.5,0.5 4.5,4.45 8.5,0.5" fill="none" stroke="#7d8790" stroke-width="1.1"/></svg>
<svg class="r" style="left:844px;top:33px;" width="17" height="15" viewBox="0 0 17 15"><rect x="1" y="1.5" width="11" height="8" fill="none" stroke="#3d4a57" stroke-width="1.1"/><rect x="4.5" y="5" width="11.5" height="8.5" fill="none" stroke="#3d4a57" stroke-width="1.1"/><path d="M1,4h11M4.5,8h11.5" stroke="#3d4a57" stroke-width="1"/></svg>
<svg class="r" style="left:896.5px;top:33px;" width="17" height="16" viewBox="0 0 17 16"><path d="M8.5,1 C3.5,1 1,4.5 1,8 C1,12 4.5,15 8,15 C9.5,15 9.5,13.5 9,12.5 C8.3,11.3 9.3,10.3 10.5,10.3 H13 C15,10.3 16,9 16,7.5 C16,3.5 13,1 8.5,1Z" fill="none" stroke="#3d4a57" stroke-width="1.2"/><circle cx="4.5" cy="7" r="1.1" fill="#3d4a57"/><circle cx="7" cy="4.2" r="1.1" fill="#3d4a57"/><circle cx="11" cy="4.2" r="1.1" fill="#3d4a57"/><circle cx="13" cy="7" r="1.1" fill="#3d4a57"/></svg>
<svg class="r" style="left:920.5px;top:38.525px;" width="9" height="4.95" viewBox="0 0 9 4.95"><polyline points="0.5,0.5 4.5,4.45 8.5,0.5" fill="none" stroke="#7d8790" stroke-width="1.1"/></svg>
<svg class="r" style="left:955px;top:33px;" width="17.0" height="17.0" viewBox="0 0 17.0 17.0"><g transform="scale(1.0)"><path d="M4.5,7 L9,1.5 L14,6 L10.5,10.5 C8.5,11 6,9.5 4.5,7Z" fill="none" stroke="#3d4a57" stroke-width="1.3"/><text x="2" y="16" font-size="7.6" font-weight="700" font-family="Liberation Sans" fill="#3d4a57">css</text></g></svg>
<svg class="r" style="left:300px;top:79px;" width="16" height="14" viewBox="0 0 16 14"><path d="M1,11 V1 H9 V4" fill="none" stroke="#6a737c" stroke-width="1.1"/><rect x="6" y="5" width="9" height="8.5" fill="none" stroke="#6a737c" stroke-width="1.1"/></svg>
<div class="t" style="top:79.94px;font-size:13.6px;line-height:13.6px;left:324.00px;color:#3b3f44;">DataSource_HR_...</div>
<svg class="r" style="left:453.0px;top:83.2px;" width="12" height="6.6000000000000005" viewBox="0 0 12 6.6000000000000005"><polyline points="1,1 6.0,5.6000000000000005 11,1" fill="none" stroke="#3a4654" stroke-width="1.6"/></svg>
<div class="r" style="left:428px;top:164px;width:1px;height:42px;background:#dde3ea;"></div>
<div class="r" style="left:617.5px;top:164px;width:1px;height:42px;background:#dde3ea;"></div>
<div class="r" style="left:693px;top:164px;width:1px;height:42px;background:#dde3ea;"></div>
<div class="t" style="top:160.55px;font-size:13px;line-height:13px;left:380.30px;color:#4a5561;">File</div>
<div class="t" style="top:160.55px;font-size:13px;line-height:13px;left:445.50px;color:#4a5561;">Data</div>
<div class="t" style="top:160.55px;font-size:13px;line-height:13px;left:634.50px;color:#4a5561;">Display</div>
<div class="t" style="top:160.55px;font-size:13px;line-height:13px;left:710.80px;color:#4a5561;">Tools</div>
<svg class="r" style="left:380.5px;top:182px;" width="14" height="14" viewBox="0 0 14 14"><path d="M1,1 H10.5 L13,3.5 V13 H1Z" fill="none" stroke="#6a737c" stroke-width="1.2"/><path d="M3.5,1 V5 H10 V1 M3.5,13 V8.5 H10.5 V13" fill="none" stroke="#6a737c" stroke-width="1.1"/><rect x="5.5" y="10" width="2" height="2" fill="#6a737c"/></svg>
<svg class="r" style="left:401.5px;top:186.025px;" width="9" height="4.95" viewBox="0 0 9 4.95"><polyline points="0.5,0.5 4.5,4.45 8.5,0.5" fill="none" stroke="#9aa2aa" stroke-width="1.1"/></svg>
<div class="r" style="left:436.5px;top:176px;width:34px;height:26px;background:#3d79ad;border-radius:3px;"></div>
<svg class="r" style="left:445.5px;top:181px;" width="16" height="16" viewBox="0 0 16 16"><path d="M2,6.5 A6.3,6.3 0 0 1 13.5,4.5" fill="none" stroke="#dbeeff" stroke-width="1.9"/><path d="M14,9.5 A6.3,6.3 0 0 1 2.5,11.5" fill="none" stroke="#dbeeff" stroke-width="1.9"/><path d="M14.5,1 V5.5 H10" fill="none" stroke="#dbeeff" stroke-width="1.9"/><path d="M1.5,15 V10.5 H6" fill="none" stroke="#dbeeff" stroke-width="1.9"/></svg>
<svg class="r" style="left:486px;top:181px;" width="16" height="16" viewBox="0 0 16 16"><path d="M13.5,9 A6,6 0 1 1 11.5,3.5" fill="none" stroke="#d5d9dd" stroke-width="1.4"/><path d="M9.5,0.5 L12.5,3.5 L9,5.5" fill="none" stroke="#d5d9dd" stroke-width="1.4"/></svg>
<svg class="r" style="left:527.5px;top:180.5px;" width="15" height="16" viewBox="0 0 15 16"><text x="0" y="13" font-size="15" font-family="Liberation Sans" fill="#5a6570">{ }</text></svg>
<svg class="r" style="left:550.5px;top:186.025px;" width="9" height="4.95" viewBox="0 0 9 4.95"><polyline points="0.5,0.5 4.5,4.45 8.5,0.5" fill="none" stroke="#9aa2aa" stroke-width="1.1"/></svg>
<svg class="r" style="left:583.4000000000001px;top:180.2px;" width="17.6" height="17.6" viewBox="0 0 17.6 17.6"><circle cx="8.8" cy="8.8" r="7.8" fill="none" stroke="#4a5561" stroke-width="1.2"/><circle cx="8.8" cy="4.6" r="1.2" fill="#4a5561"/><path d="M7.0,7.3 H9.4 V12.8 M6.8,13.0 H10.8" fill="none" stroke="#4a5561" stroke-width="1.5"/></svg>
<svg class="r" style="left:635px;top:182px;" width="15" height="14" viewBox="0 0 15 14"><path d="M1,1 L5,5 M5,2 V5 H2 M14,1 L10,5 M10,2 V5 H13 M1,13 L5,9 M2,9 H5 V12 M14,13 L10,9 M13,9 H10 V12" fill="none" stroke="#5a6570" stroke-width="1.3"/></svg>
<div class="r" style="left:701px;top:176px;width:33px;height:26px;background:#3d79ad;border-radius:3px;"></div>
<svg class="r" style="left:709.5px;top:182px;" width="16" height="14" viewBox="0 0 16 14"><path d="M1,1 H15 L9.5,7 V13 L6.5,11.5 V7Z" fill="none" stroke="#fff" stroke-width="1.4"/></svg>
<div class="r" style="left:1870px;top:167.3px;width:68.5px;height:26px;background:#2f6391;border-radius:3px;"></div>
<div class="t" style="top:175.06px;font-size:12.4px;line-height:12.4px;left:1879.40px;font-weight:700;color:#f4f9ff;">Designer</div>
<svg class="r" style="left:373px;top:223px;" width="18" height="17" viewBox="0 0 18 17"><path d="M1,1 H13 L8.5,6 V12 L5.5,10.5 V6Z" fill="none" stroke="#fff" stroke-width="1.3"/><path d="M13,10 V16 M10,13 H16" stroke="#fff" stroke-width="1.3"/></svg>
<div class="r" style="left:1866px;top:1122.5px;width:36.5px;height:25px;background:#4a90d0;border-radius:3px;"></div>
<div class="t" style="top:1129.78px;font-size:13.2px;line-height:13.2px;left:1874.50px;font-weight:700;color:#f2f8ff;">OK</div>
<div class="t" style="top:1129.44px;font-size:13.6px;line-height:13.6px;left:1917.00px;color:#f2f5f8;">Cancel</div>
</body></html>
